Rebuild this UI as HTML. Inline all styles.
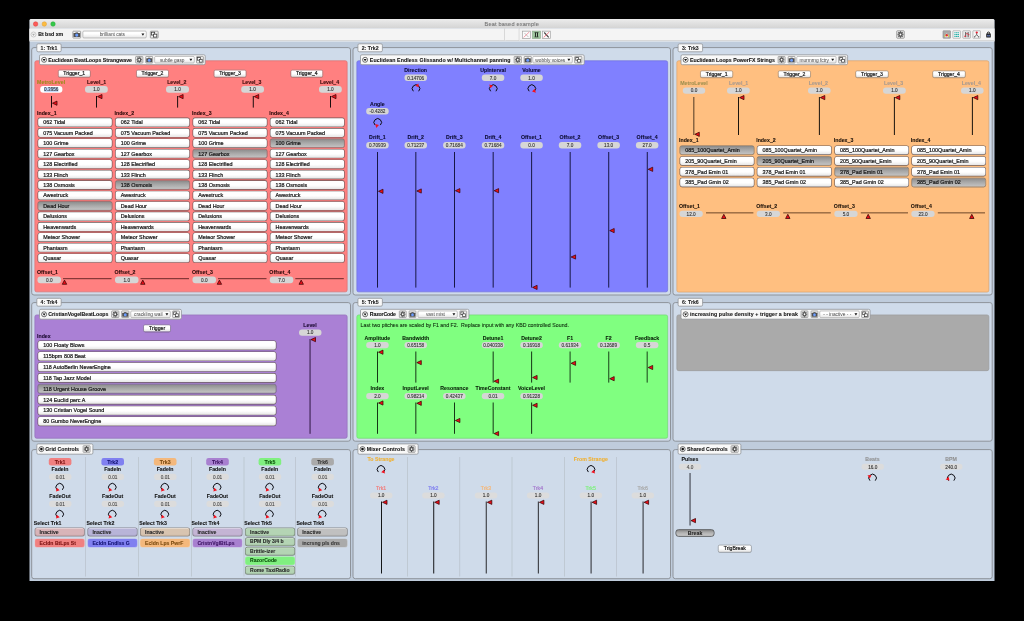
<!DOCTYPE html>
<html><head><meta charset="utf-8"><title>Beat based example</title>
<style>
html,body{margin:0;padding:0;background:#000;}
body{width:1024px;height:621px;position:relative;overflow:hidden;font-family:"Liberation Sans",sans-serif;}
#s{position:absolute;left:0;top:0;width:10240px;height:6210px;transform:scale(0.1);transform-origin:0 0;will-change:transform;}

#s>div,#s>span,#s>svg{position:absolute;box-sizing:border-box;}
.t{font-size:52.5px;line-height:80px;height:80px;white-space:nowrap;color:#111;}
.b{font-weight:bold;-webkit-text-stroke:0.8px currentColor;}
.m{font-weight:normal;-webkit-text-stroke:2.2px currentColor;}
.r{font-weight:normal;-webkit-text-stroke:1px currentColor;}
.win{background:#bfccdc;border-radius:16px 16px 0 0;overflow:hidden;}
.tbar{background:linear-gradient(#ececec,#d4d4d4);border-bottom:5px solid #b0b0b0;border-radius:16px 16px 0 0;}
.dot{border-radius:50%;border:5px solid #000;}
.tool{background:#f4f4f4;}
.seg{background:#f4f4f4;border-bottom:5.5px solid #bdbdbd;border-right:5.5px solid #bdbdbd;}
.grp{border:10px solid #8e939a;border-radius:28px;background:#cfdbea;}
.tab,.tb{background:#f8f8f8;border:8.5px solid #8f9398;border-radius:18px;}
.pan{border:7px solid #888;border-radius:22px;}
.vb{background:#d6d6d6;border-radius:30px;}
.vb2{background:#dcdcdc;border-radius:30px;}
.btn{background:linear-gradient(#fff 50%,#e2e2e2);border:5.5px solid #7c7c7c;border-radius:18px;box-shadow:0 4px 3px rgba(0,0,0,.2);}
.it{background:linear-gradient(#fff 55%,#e6e6e6);border:6px solid rgba(80,64,64,.8);border-radius:24px;box-shadow:0 3px 3px rgba(0,0,0,.2);}
.it.sel{background:linear-gradient(#8c8c8c,#a8a8a8 45%,#c4c4c4);border-color:#6c6c6c;}
.gi{border:7px solid rgba(80,80,80,.55);border-radius:25px;box-shadow:inset 0 8px 6px rgba(255,255,255,.35),inset 0 -8px 8px rgba(0,0,0,.12);}
.gi.gs{border-color:rgba(255,255,255,.2);box-shadow:none;border-radius:28px;}
.bdg{border-radius:24px;}
.brk{background:linear-gradient(#8a8a8a,#b4b4b4 50%,#c8c8c8);border:8px solid #4a4a4a;border-radius:30px;}
.sel2{background:linear-gradient(#fff 40%,#e6e6e6);border:5.5px solid #8c8c8c;border-radius:13px;}
.ln{background:#000;}
.mk{width:54px;height:50px;overflow:visible;}
.kn{width:120px;height:120px;overflow:visible;}
.ic{overflow:visible;}
</style></head>
<body>

<div id="s">
<div class="win" style="left:295px;top:190px;width:9650px;height:5619px;"></div>
<div class="tbar" style="left:295px;top:190px;width:9650px;height:96px;"></div>
<div class="dot" style="left:331px;top:215px;width:50px;height:50px;background:#fc5b57;border-color:#df3e3a;"></div>
<div class="dot" style="left:418px;top:215px;width:50px;height:50px;background:#fdbc40;border-color:#de9f34;"></div>
<div class="dot" style="left:505px;top:215px;width:50px;height:50px;background:#34c84a;border-color:#27aa35;"></div>
<span class="t r" style="left:5117px;top:201px;transform:translateX(-50%);font-size:56px;color:#767676;letter-spacing:1.9px;-webkit-text-stroke:1px currentColor;">Beat based example</span>
<div class="tool" style="left:295px;top:286px;width:9650px;height:129px;"></div>
<div class="seg" style="left:295px;top:286px;width:4752px;height:119px;"></div>
<div class="seg" style="left:5052px;top:286px;width:141px;height:119px;"></div>
<div class="seg" style="left:5198px;top:286px;width:4747px;height:119px;"></div>
<svg class="ic" opacity="0.3" style="left:300px;top:310px;width:70px;height:70px" viewBox="0 0 7 7"><circle cx="3.5" cy="3.5" r="2.5" fill="#fff" stroke="#222" stroke-width="0.65"/><path d="M2 2.7H5L3.5 4.9Z" fill="#111"/></svg>
<span class="t b" style="left:382px;top:305px;letter-spacing:-0.5px;">Bt bsd xm</span>
<svg class="ic" preserveAspectRatio="none" style="left:725px;top:308px;width:85px;height:76px" viewBox="0 0 8 7"><rect x="0.35" y="0.35" width="7.3" height="6.3" rx="0.5" fill="#f6f6f6" stroke="#8c8c8c" stroke-width="0.75"/><rect x="0.9" y="2.1" width="6.2" height="3.7" rx="0.5" fill="#505050"/><rect x="2.8" y="1.5" width="2.4" height="1" fill="#505050"/><circle cx="4" cy="3.95" r="1.45" fill="#6a9cff"/></svg>
<div class="sel2" style="left:826px;top:308px;width:639px;height:74px;"></div>
<span class="t r" style="left:1123.5px;top:307px;transform:translateX(-50%);font-size:48px;color:#484848;-webkit-text-stroke:0;">brilliant cats</span>
<svg class="ic" style="left:1414px;top:335px;width:30px;height:22px" viewBox="0 0 4 3"><path d="M0 0H4L2 3Z" fill="#111"/></svg>
<svg class="ic" preserveAspectRatio="none" style="left:1500px;top:308px;width:85px;height:76px" viewBox="0 0 8 7"><rect x="0.35" y="0.35" width="7.3" height="6.3" rx="0.5" fill="#efefef" stroke="#8c8c8c" stroke-width="0.75"/><rect x="1.5" y="1.3" width="2.9" height="2.6" fill="#fff" stroke="#333" stroke-width="0.7"/><rect x="3.4" y="3.1" width="3" height="2.7" fill="#fff" stroke="#333" stroke-width="0.7"/></svg>
<svg class="ic" preserveAspectRatio="none" style="left:5222px;top:308px;width:84px;height:79px" viewBox="0 0 8 7"><rect x="0.3" y="0.3" width="7.4" height="6.4" fill="#fbfbfb" stroke="#9c9c9c" stroke-width="0.6"/><path d="M2.2 2L6 5.6" stroke="#a0a0a0" stroke-width="0.6"/><path d="M1.3 5.9L6.7 1.1" stroke="#f07888" stroke-width="0.65"/></svg>
<svg class="ic" preserveAspectRatio="none" style="left:5322px;top:308px;width:85px;height:79px" viewBox="0 0 8 7"><rect x="0.3" y="0.3" width="7.4" height="6.4" fill="#a0c8a0" stroke="#88a888" stroke-width="0.6"/><path d="M3.1 1.7V5.3M5 1.7V5.3" stroke="#111" stroke-width="0.8"/><path d="M2.2 1.6H5.9M2.2 5.4H5.9" stroke="#111" stroke-width="0.55"/></svg>
<svg class="ic" preserveAspectRatio="none" style="left:5423px;top:308px;width:83px;height:79px" viewBox="0 0 8 7"><rect x="0.3" y="0.3" width="7.4" height="6.4" fill="#fbfbfb" stroke="#9c9c9c" stroke-width="0.6"/><path d="M1.9 1.5L6.2 5.8" stroke="#3a3a3a" stroke-width="1"/><path d="M1.3 5.9L6.7 1.1" stroke="#f05868" stroke-width="0.7"/></svg>
<svg class="ic" preserveAspectRatio="none" style="left:8964px;top:304px;width:82px;height:82px" viewBox="0 0 8 7"><rect x="0.35" y="0.35" width="7.3" height="6.3" rx="0.5" fill="#efefef" stroke="#8c8c8c" stroke-width="0.75"/><path d="M5.80 3.50L6.85 3.50M5.27 4.77L6.02 5.52M4.00 5.30L4.00 6.35M2.73 4.77L1.98 5.52M2.20 3.50L1.15 3.50M2.73 2.23L1.98 1.48M4.00 1.70L4.00 0.65M5.27 2.23L6.02 1.48" stroke="#555" stroke-width="1.15"/><circle cx="4" cy="3.5" r="1.5" fill="#fff" stroke="#555" stroke-width="1.25"/></svg>
<svg class="ic" preserveAspectRatio="none" style="left:9427px;top:304px;width:81px;height:82px" viewBox="0 0 8 7"><rect x="0.3" y="0.3" width="7.4" height="6.4" rx="0.4" fill="#a9a9a9" stroke="#8e8e8e" stroke-width="0.6"/><path d="M1.5 5.3A2.6 2.9 0 0 1 6.5 5.3L5.2 5.6A1.3 1.6 0 0 0 2.8 5.6Z" fill="#e6dc3c"/><path d="M2.6 5.8L4 2.2L5.4 5.8Z" fill="#f4f4f4"/><circle cx="4" cy="4.1" r="1.05" fill="#e02838"/></svg>
<svg class="ic" preserveAspectRatio="none" style="left:9526px;top:304px;width:81px;height:82px" viewBox="0 0 8 7"><rect x="0.3" y="0.3" width="7.4" height="6.4" rx="0.4" fill="#f6f6f6" stroke="#a0a0a0" stroke-width="0.6"/><path d="M1.7 2H6.3M1.7 3.6H6.3M1.7 5.2H6.3" stroke="#2cb0a8" stroke-width="1.05" stroke-dasharray="1.3 0.35"/></svg>
<svg class="ic" preserveAspectRatio="none" style="left:9625px;top:304px;width:82px;height:82px" viewBox="0 0 8 7"><rect x="0.3" y="0.3" width="7.4" height="6.4" rx="0.4" fill="#ececec" stroke="#a0a0a0" stroke-width="0.6"/><path d="M3.1 1.4V5.8M5.5 1.4V5.8" stroke="#4a4a4a" stroke-width="0.85"/><path d="M1.6 5H3.6M3.8 2.7H5M5.6 3.6H6.6" stroke="#e03040" stroke-width="1.05"/></svg>
<svg class="ic" preserveAspectRatio="none" style="left:9726px;top:304px;width:81px;height:82px" viewBox="0 0 8 7"><rect x="0.3" y="0.3" width="7.4" height="6.4" rx="0.4" fill="#f6f6f6" stroke="#a0a0a0" stroke-width="0.6"/><path d="M4 2V3.6L2.2 5.4M4 3.6L5.8 5.4" stroke="#3c3c3c" stroke-width="0.65" fill="none"/><circle cx="2" cy="5.5" r="0.7" fill="#777"/><circle cx="6" cy="5.5" r="0.7" fill="#777"/><ellipse cx="4.1" cy="1.8" rx="1.1" ry="0.8" fill="#e82030"/></svg>
<svg class="ic" preserveAspectRatio="none" style="left:9854px;top:312px;width:62px;height:70px" viewBox="0 0 8 7"><rect x="0" y="0" width="8" height="7" rx="1.5" fill="#fbfbfb"/><path d="M2.5 2.6V2A1.5 1.2 0 0 1 5.5 2V2.6" fill="none" stroke="#111" stroke-width="1"/><rect x="1.1" y="2.4" width="5.8" height="4" rx="0.5" fill="#141414"/><rect x="2.3" y="3.6" width="3.4" height="1.7" fill="#7088c8"/><path d="M4 3.6V5.3" stroke="#141414" stroke-width="0.4"/></svg>
<div class="grp" style="left:312px;top:471px;width:3198px;height:2484px;"></div>
<div class="grp" style="left:312px;top:3021px;width:3198px;height:1396px;"></div>
<div class="grp" style="left:312px;top:4491px;width:3198px;height:1301px;"></div>
<div class="grp" style="left:3525px;top:471px;width:3185px;height:2484px;"></div>
<div class="grp" style="left:3525px;top:3021px;width:3185px;height:1396px;"></div>
<div class="grp" style="left:3525px;top:4491px;width:3185px;height:1301px;"></div>
<div class="grp" style="left:6725px;top:471px;width:3202px;height:2484px;"></div>
<div class="grp" style="left:6725px;top:3021px;width:3202px;height:1396px;"></div>
<div class="grp" style="left:6725px;top:4491px;width:3202px;height:1301px;"></div>
<div class="tab" style="left:364px;top:434px;width:252px;height:88px;"></div>
<span class="t b" style="left:490px;top:440px;transform:translateX(-50%);font-size:52px;color:#222;">1: Trk1</span>
<div class="tab" style="left:364px;top:2979px;width:252px;height:87px;"></div>
<span class="t b" style="left:490px;top:2984.5px;transform:translateX(-50%);font-size:52px;color:#222;">4: Trk4</span>
<div class="tab" style="left:3575px;top:434px;width:253px;height:88px;"></div>
<span class="t b" style="left:3701.5px;top:440px;transform:translateX(-50%);font-size:52px;color:#222;">2: Trk2</span>
<div class="tab" style="left:3575px;top:2979px;width:253px;height:87px;"></div>
<span class="t b" style="left:3701.5px;top:2984.5px;transform:translateX(-50%);font-size:52px;color:#222;">5: Trk5</span>
<div class="tab" style="left:6777px;top:434px;width:253px;height:88px;"></div>
<span class="t b" style="left:6903.5px;top:440px;transform:translateX(-50%);font-size:52px;color:#222;">3: Trk3</span>
<div class="tab" style="left:6777px;top:2979px;width:253px;height:87px;"></div>
<span class="t b" style="left:6903.5px;top:2984.5px;transform:translateX(-50%);font-size:52px;color:#222;">6: Trk6</span>
<div class="pan" style="left:345px;top:604px;width:3130px;height:2318px;background:#ff8080;border-color:#d97070;"></div>
<div class="tb" style="left:391px;top:544px;width:1665px;height:107px;"></div>
<svg class="ic" style="left:406px;top:562.5px;width:70px;height:70px" viewBox="0 0 7 7"><circle cx="3.5" cy="3.5" r="2.5" fill="#fff" stroke="#222" stroke-width="0.65"/><path d="M2 2.7H5L3.5 4.9Z" fill="#111"/></svg>
<span class="t b" style="left:483px;top:559.5px;letter-spacing:-0.2px;">Euclidean BeatLoops Strangwave</span>
<svg class="ic" preserveAspectRatio="none" style="left:1353px;top:561px;width:79px;height:73px" viewBox="0 0 8 7"><rect x="0.35" y="0.35" width="7.3" height="6.3" rx="0.5" fill="#efefef" stroke="#8c8c8c" stroke-width="0.75"/><path d="M5.80 3.50L6.85 3.50M5.27 4.77L6.02 5.52M4.00 5.30L4.00 6.35M2.73 4.77L1.98 5.52M2.20 3.50L1.15 3.50M2.73 2.23L1.98 1.48M4.00 1.70L4.00 0.65M5.27 2.23L6.02 1.48" stroke="#555" stroke-width="1.15"/><circle cx="4" cy="3.5" r="1.5" fill="#fff" stroke="#555" stroke-width="1.25"/></svg>
<svg class="ic" preserveAspectRatio="none" style="left:1454px;top:561px;width:76px;height:73px" viewBox="0 0 8 7"><rect x="0.35" y="0.35" width="7.3" height="6.3" rx="0.5" fill="#f6f6f6" stroke="#8c8c8c" stroke-width="0.75"/><rect x="0.9" y="2.1" width="6.2" height="3.7" rx="0.5" fill="#505050"/><rect x="2.8" y="1.5" width="2.4" height="1" fill="#505050"/><circle cx="4" cy="3.95" r="1.45" fill="#6a9cff"/></svg>
<div class="sel2" style="left:1544px;top:562px;width:401px;height:71px;"></div>
<span class="t r" style="left:1722.5px;top:559.5px;transform:translateX(-50%);font-size:48px;color:#484848;-webkit-text-stroke:0;">subtle gasp</span>
<svg class="ic" style="left:1894px;top:587.5px;width:30px;height:22px" viewBox="0 0 4 3"><path d="M0 0H4L2 3Z" fill="#111"/></svg>
<svg class="ic" preserveAspectRatio="none" style="left:1962px;top:561px;width:75px;height:73px" viewBox="0 0 8 7"><rect x="0.35" y="0.35" width="7.3" height="6.3" rx="0.5" fill="#efefef" stroke="#8c8c8c" stroke-width="0.75"/><rect x="1.5" y="1.3" width="2.9" height="2.6" fill="#fff" stroke="#333" stroke-width="0.7"/><rect x="3.4" y="3.1" width="3" height="2.7" fill="#fff" stroke="#333" stroke-width="0.7"/></svg>
<div class="btn" style="left:580px;top:698px;width:325px;height:76px;"></div>
<span class="t m" style="left:742.5px;top:694px;transform:translateX(-50%);font-size:51.5px;color:#1c1c1c;">Trigger_1</span>
<div class="btn" style="left:1362px;top:698px;width:326px;height:76px;"></div>
<span class="t m" style="left:1525px;top:694px;transform:translateX(-50%);font-size:51.5px;color:#1c1c1c;">Trigger_2</span>
<div class="btn" style="left:2138px;top:698px;width:325px;height:76px;"></div>
<span class="t m" style="left:2300.5px;top:694px;transform:translateX(-50%);font-size:51.5px;color:#1c1c1c;">Trigger_3</span>
<div class="btn" style="left:2906px;top:698px;width:324px;height:76px;"></div>
<span class="t m" style="left:3068px;top:694px;transform:translateX(-50%);font-size:51.5px;color:#1c1c1c;">Trigger_4</span>
<span class="t b" style="left:370px;top:780px;color:#9c8a1c;letter-spacing:0.5px;">MetroLevel</span>
<div class="vb" style="left:402px;top:860px;width:222px;height:68px;background:#fff;"></div>
<div class="" style="left:442px;top:872px;width:142px;height:46px;background:#b9d6fb;"></div>
<span class="t r" style="left:513px;top:856px;transform:translateX(-50%);font-size:47px;color:#333;">0.3956</span>
<div class="ln" style="left:510.5px;top:960px;width:9px;height:116px;"></div>
<svg class="mk" viewBox="0 0 5.4 5" style="left:521px;top:1007px"><path d="M0.4 2.5L4.9 0.4V4.6Z" fill="#ee0c18" stroke="#3a0606" stroke-width="0.75" stroke-linejoin="round"/></svg>
<span class="t b" style="left:870px;top:780px;color:#3a0a0a;">Level_1</span>
<div class="vb" style="left:850px;top:860px;width:228px;height:68px;"></div>
<span class="t r" style="left:964px;top:856px;transform:translateX(-50%);font-size:47px;color:#333;">1.0</span>
<div class="ln" style="left:960.5px;top:960px;width:9px;height:116px;"></div>
<svg class="mk" viewBox="0 0 5.4 5" style="left:971px;top:941px"><path d="M0.4 2.5L4.9 0.4V4.6Z" fill="#ee0c18" stroke="#3a0606" stroke-width="0.75" stroke-linejoin="round"/></svg>
<span class="t b" style="left:1864px;top:780px;transform:translateX(-100%);color:#3a0a0a;">Level_2</span>
<div class="vb" style="left:1660px;top:860px;width:230px;height:68px;"></div>
<span class="t r" style="left:1775px;top:856px;transform:translateX(-50%);font-size:47px;color:#333;">1.0</span>
<div class="ln" style="left:1771.5px;top:960px;width:9px;height:116px;"></div>
<svg class="mk" viewBox="0 0 5.4 5" style="left:1782px;top:941px"><path d="M0.4 2.5L4.9 0.4V4.6Z" fill="#ee0c18" stroke="#3a0606" stroke-width="0.75" stroke-linejoin="round"/></svg>
<span class="t b" style="left:2614px;top:780px;transform:translateX(-100%);color:#3a0a0a;">Level_3</span>
<div class="vb" style="left:2412px;top:860px;width:228px;height:68px;"></div>
<span class="t r" style="left:2526px;top:856px;transform:translateX(-50%);font-size:47px;color:#333;">1.0</span>
<div class="ln" style="left:2527.5px;top:960px;width:9px;height:116px;"></div>
<svg class="mk" viewBox="0 0 5.4 5" style="left:2538px;top:941px"><path d="M0.4 2.5L4.9 0.4V4.6Z" fill="#ee0c18" stroke="#3a0606" stroke-width="0.75" stroke-linejoin="round"/></svg>
<span class="t b" style="left:3392px;top:780px;transform:translateX(-100%);color:#3a0a0a;">Level_4</span>
<div class="vb" style="left:3190px;top:860px;width:228px;height:68px;"></div>
<span class="t r" style="left:3304px;top:856px;transform:translateX(-50%);font-size:47px;color:#333;">1.0</span>
<div class="ln" style="left:3300.5px;top:960px;width:9px;height:116px;"></div>
<svg class="mk" viewBox="0 0 5.4 5" style="left:3311px;top:941px"><path d="M0.4 2.5L4.9 0.4V4.6Z" fill="#ee0c18" stroke="#3a0606" stroke-width="0.75" stroke-linejoin="round"/></svg>
<span class="t b" style="left:370px;top:1091px;color:#2a0808;">Index_1</span>
<div class="it" style="left:376px;top:1176px;width:748px;height:94px;"></div>
<span class="t m" style="left:432px;top:1183.5px;font-size:54.2px;color:#1a1a1a;">062 Tidal</span>
<div class="it" style="left:376px;top:1280.5px;width:748px;height:94px;"></div>
<span class="t m" style="left:432px;top:1287.9px;font-size:54.2px;color:#1a1a1a;">075 Vacuum Packed</span>
<div class="it" style="left:376px;top:1384.9px;width:748px;height:94px;"></div>
<span class="t m" style="left:432px;top:1392.4px;font-size:54.2px;color:#1a1a1a;">100 Grime</span>
<div class="it" style="left:376px;top:1489.4px;width:748px;height:94px;"></div>
<span class="t m" style="left:432px;top:1496.8px;font-size:54.2px;color:#1a1a1a;">127 Gearbox</span>
<div class="it" style="left:376px;top:1593.8px;width:748px;height:94px;"></div>
<span class="t m" style="left:432px;top:1601.3px;font-size:54.2px;color:#1a1a1a;">128 Electrified</span>
<div class="it" style="left:376px;top:1698.3px;width:748px;height:94px;"></div>
<span class="t m" style="left:432px;top:1705.7px;font-size:54.2px;color:#1a1a1a;">133 Flinch</span>
<div class="it" style="left:376px;top:1802.7px;width:748px;height:94px;"></div>
<span class="t m" style="left:432px;top:1810.2px;font-size:54.2px;color:#1a1a1a;">138 Osmosis</span>
<div class="it" style="left:376px;top:1907.2px;width:748px;height:94px;"></div>
<span class="t m" style="left:432px;top:1914.7px;font-size:54.2px;color:#1a1a1a;">Awestruck</span>
<div class="it sel" style="left:376px;top:2011.6px;width:748px;height:94px;"></div>
<span class="t m" style="left:432px;top:2019.1px;font-size:54.2px;color:#1a1a1a;">Dead Hour</span>
<div class="it" style="left:376px;top:2116.1px;width:748px;height:94px;"></div>
<span class="t m" style="left:432px;top:2123.5px;font-size:54.2px;color:#1a1a1a;">Delusions</span>
<div class="it" style="left:376px;top:2220.5px;width:748px;height:94px;"></div>
<span class="t m" style="left:432px;top:2228px;font-size:54.2px;color:#1a1a1a;">Heavenwards</span>
<div class="it" style="left:376px;top:2325px;width:748px;height:94px;"></div>
<span class="t m" style="left:432px;top:2332.4px;font-size:54.2px;color:#1a1a1a;">Meteor Shower</span>
<div class="it" style="left:376px;top:2429.4px;width:748px;height:94px;"></div>
<span class="t m" style="left:432px;top:2436.9px;font-size:54.2px;color:#1a1a1a;">Phantasm</span>
<div class="it" style="left:376px;top:2533.8px;width:748px;height:94px;"></div>
<span class="t m" style="left:432px;top:2541.3px;font-size:54.2px;color:#1a1a1a;">Quasar</span>
<span class="t b" style="left:370px;top:2681px;color:#2a0808;">Offset_1</span>
<span class="t b" style="left:1145px;top:1091px;color:#2a0808;">Index_2</span>
<div class="it" style="left:1151px;top:1176px;width:748px;height:94px;"></div>
<span class="t m" style="left:1207px;top:1183.5px;font-size:54.2px;color:#1a1a1a;">062 Tidal</span>
<div class="it" style="left:1151px;top:1280.5px;width:748px;height:94px;"></div>
<span class="t m" style="left:1207px;top:1287.9px;font-size:54.2px;color:#1a1a1a;">075 Vacuum Packed</span>
<div class="it" style="left:1151px;top:1384.9px;width:748px;height:94px;"></div>
<span class="t m" style="left:1207px;top:1392.4px;font-size:54.2px;color:#1a1a1a;">100 Grime</span>
<div class="it" style="left:1151px;top:1489.4px;width:748px;height:94px;"></div>
<span class="t m" style="left:1207px;top:1496.8px;font-size:54.2px;color:#1a1a1a;">127 Gearbox</span>
<div class="it" style="left:1151px;top:1593.8px;width:748px;height:94px;"></div>
<span class="t m" style="left:1207px;top:1601.3px;font-size:54.2px;color:#1a1a1a;">128 Electrified</span>
<div class="it" style="left:1151px;top:1698.3px;width:748px;height:94px;"></div>
<span class="t m" style="left:1207px;top:1705.7px;font-size:54.2px;color:#1a1a1a;">133 Flinch</span>
<div class="it sel" style="left:1151px;top:1802.7px;width:748px;height:94px;"></div>
<span class="t m" style="left:1207px;top:1810.2px;font-size:54.2px;color:#1a1a1a;">138 Osmosis</span>
<div class="it" style="left:1151px;top:1907.2px;width:748px;height:94px;"></div>
<span class="t m" style="left:1207px;top:1914.7px;font-size:54.2px;color:#1a1a1a;">Awestruck</span>
<div class="it" style="left:1151px;top:2011.6px;width:748px;height:94px;"></div>
<span class="t m" style="left:1207px;top:2019.1px;font-size:54.2px;color:#1a1a1a;">Dead Hour</span>
<div class="it" style="left:1151px;top:2116.1px;width:748px;height:94px;"></div>
<span class="t m" style="left:1207px;top:2123.5px;font-size:54.2px;color:#1a1a1a;">Delusions</span>
<div class="it" style="left:1151px;top:2220.5px;width:748px;height:94px;"></div>
<span class="t m" style="left:1207px;top:2228px;font-size:54.2px;color:#1a1a1a;">Heavenwards</span>
<div class="it" style="left:1151px;top:2325px;width:748px;height:94px;"></div>
<span class="t m" style="left:1207px;top:2332.4px;font-size:54.2px;color:#1a1a1a;">Meteor Shower</span>
<div class="it" style="left:1151px;top:2429.4px;width:748px;height:94px;"></div>
<span class="t m" style="left:1207px;top:2436.9px;font-size:54.2px;color:#1a1a1a;">Phantasm</span>
<div class="it" style="left:1151px;top:2533.8px;width:748px;height:94px;"></div>
<span class="t m" style="left:1207px;top:2541.3px;font-size:54.2px;color:#1a1a1a;">Quasar</span>
<span class="t b" style="left:1145px;top:2681px;color:#2a0808;">Offset_2</span>
<span class="t b" style="left:1920px;top:1091px;color:#2a0808;">Index_3</span>
<div class="it" style="left:1926px;top:1176px;width:748px;height:94px;"></div>
<span class="t m" style="left:1982px;top:1183.5px;font-size:54.2px;color:#1a1a1a;">062 Tidal</span>
<div class="it" style="left:1926px;top:1280.5px;width:748px;height:94px;"></div>
<span class="t m" style="left:1982px;top:1287.9px;font-size:54.2px;color:#1a1a1a;">075 Vacuum Packed</span>
<div class="it" style="left:1926px;top:1384.9px;width:748px;height:94px;"></div>
<span class="t m" style="left:1982px;top:1392.4px;font-size:54.2px;color:#1a1a1a;">100 Grime</span>
<div class="it sel" style="left:1926px;top:1489.4px;width:748px;height:94px;"></div>
<span class="t m" style="left:1982px;top:1496.8px;font-size:54.2px;color:#1a1a1a;">127 Gearbox</span>
<div class="it" style="left:1926px;top:1593.8px;width:748px;height:94px;"></div>
<span class="t m" style="left:1982px;top:1601.3px;font-size:54.2px;color:#1a1a1a;">128 Electrified</span>
<div class="it" style="left:1926px;top:1698.3px;width:748px;height:94px;"></div>
<span class="t m" style="left:1982px;top:1705.7px;font-size:54.2px;color:#1a1a1a;">133 Flinch</span>
<div class="it" style="left:1926px;top:1802.7px;width:748px;height:94px;"></div>
<span class="t m" style="left:1982px;top:1810.2px;font-size:54.2px;color:#1a1a1a;">138 Osmosis</span>
<div class="it" style="left:1926px;top:1907.2px;width:748px;height:94px;"></div>
<span class="t m" style="left:1982px;top:1914.7px;font-size:54.2px;color:#1a1a1a;">Awestruck</span>
<div class="it" style="left:1926px;top:2011.6px;width:748px;height:94px;"></div>
<span class="t m" style="left:1982px;top:2019.1px;font-size:54.2px;color:#1a1a1a;">Dead Hour</span>
<div class="it" style="left:1926px;top:2116.1px;width:748px;height:94px;"></div>
<span class="t m" style="left:1982px;top:2123.5px;font-size:54.2px;color:#1a1a1a;">Delusions</span>
<div class="it" style="left:1926px;top:2220.5px;width:748px;height:94px;"></div>
<span class="t m" style="left:1982px;top:2228px;font-size:54.2px;color:#1a1a1a;">Heavenwards</span>
<div class="it" style="left:1926px;top:2325px;width:748px;height:94px;"></div>
<span class="t m" style="left:1982px;top:2332.4px;font-size:54.2px;color:#1a1a1a;">Meteor Shower</span>
<div class="it" style="left:1926px;top:2429.4px;width:748px;height:94px;"></div>
<span class="t m" style="left:1982px;top:2436.9px;font-size:54.2px;color:#1a1a1a;">Phantasm</span>
<div class="it" style="left:1926px;top:2533.8px;width:748px;height:94px;"></div>
<span class="t m" style="left:1982px;top:2541.3px;font-size:54.2px;color:#1a1a1a;">Quasar</span>
<span class="t b" style="left:1920px;top:2681px;color:#2a0808;">Offset_3</span>
<span class="t b" style="left:2693px;top:1091px;color:#2a0808;">Index_4</span>
<div class="it" style="left:2699px;top:1176px;width:748px;height:94px;"></div>
<span class="t m" style="left:2755px;top:1183.5px;font-size:54.2px;color:#1a1a1a;">062 Tidal</span>
<div class="it" style="left:2699px;top:1280.5px;width:748px;height:94px;"></div>
<span class="t m" style="left:2755px;top:1287.9px;font-size:54.2px;color:#1a1a1a;">075 Vacuum Packed</span>
<div class="it sel" style="left:2699px;top:1384.9px;width:748px;height:94px;"></div>
<span class="t m" style="left:2755px;top:1392.4px;font-size:54.2px;color:#1a1a1a;">100 Grime</span>
<div class="it" style="left:2699px;top:1489.4px;width:748px;height:94px;"></div>
<span class="t m" style="left:2755px;top:1496.8px;font-size:54.2px;color:#1a1a1a;">127 Gearbox</span>
<div class="it" style="left:2699px;top:1593.8px;width:748px;height:94px;"></div>
<span class="t m" style="left:2755px;top:1601.3px;font-size:54.2px;color:#1a1a1a;">128 Electrified</span>
<div class="it" style="left:2699px;top:1698.3px;width:748px;height:94px;"></div>
<span class="t m" style="left:2755px;top:1705.7px;font-size:54.2px;color:#1a1a1a;">133 Flinch</span>
<div class="it" style="left:2699px;top:1802.7px;width:748px;height:94px;"></div>
<span class="t m" style="left:2755px;top:1810.2px;font-size:54.2px;color:#1a1a1a;">138 Osmosis</span>
<div class="it" style="left:2699px;top:1907.2px;width:748px;height:94px;"></div>
<span class="t m" style="left:2755px;top:1914.7px;font-size:54.2px;color:#1a1a1a;">Awestruck</span>
<div class="it" style="left:2699px;top:2011.6px;width:748px;height:94px;"></div>
<span class="t m" style="left:2755px;top:2019.1px;font-size:54.2px;color:#1a1a1a;">Dead Hour</span>
<div class="it" style="left:2699px;top:2116.1px;width:748px;height:94px;"></div>
<span class="t m" style="left:2755px;top:2123.5px;font-size:54.2px;color:#1a1a1a;">Delusions</span>
<div class="it" style="left:2699px;top:2220.5px;width:748px;height:94px;"></div>
<span class="t m" style="left:2755px;top:2228px;font-size:54.2px;color:#1a1a1a;">Heavenwards</span>
<div class="it" style="left:2699px;top:2325px;width:748px;height:94px;"></div>
<span class="t m" style="left:2755px;top:2332.4px;font-size:54.2px;color:#1a1a1a;">Meteor Shower</span>
<div class="it" style="left:2699px;top:2429.4px;width:748px;height:94px;"></div>
<span class="t m" style="left:2755px;top:2436.9px;font-size:54.2px;color:#1a1a1a;">Phantasm</span>
<div class="it" style="left:2699px;top:2533.8px;width:748px;height:94px;"></div>
<span class="t m" style="left:2755px;top:2541.3px;font-size:54.2px;color:#1a1a1a;">Quasar</span>
<span class="t b" style="left:2693px;top:2681px;color:#2a0808;">Offset_4</span>
<div class="vb" style="left:375px;top:2766px;width:235px;height:66px;"></div>
<span class="t r" style="left:492.5px;top:2761px;transform:translateX(-50%);font-size:47px;color:#333;">0.0</span>
<div class="ln" style="left:630px;top:2780.5px;width:485px;height:11px;background:#7a3030;"></div>
<svg class="mk" viewBox="0 0 5.4 5" style="left:618px;top:2797px"><path d="M2.7 0.4L4.9 4.6H0.5Z" fill="#ee0c18" stroke="#3a0606" stroke-width="0.75" stroke-linejoin="round"/></svg>
<div class="vb" style="left:1150px;top:2766px;width:235px;height:66px;"></div>
<span class="t r" style="left:1267.5px;top:2761px;transform:translateX(-50%);font-size:47px;color:#333;">1.0</span>
<div class="ln" style="left:1405px;top:2780.5px;width:485px;height:11px;background:#7a3030;"></div>
<svg class="mk" viewBox="0 0 5.4 5" style="left:1401px;top:2797px"><path d="M2.7 0.4L4.9 4.6H0.5Z" fill="#ee0c18" stroke="#3a0606" stroke-width="0.75" stroke-linejoin="round"/></svg>
<div class="vb" style="left:1925px;top:2766px;width:235px;height:66px;"></div>
<span class="t r" style="left:2042.5px;top:2761px;transform:translateX(-50%);font-size:47px;color:#333;">0.0</span>
<div class="ln" style="left:2180px;top:2780.5px;width:485px;height:11px;background:#7a3030;"></div>
<svg class="mk" viewBox="0 0 5.4 5" style="left:2167px;top:2797px"><path d="M2.7 0.4L4.9 4.6H0.5Z" fill="#ee0c18" stroke="#3a0606" stroke-width="0.75" stroke-linejoin="round"/></svg>
<div class="vb" style="left:2698px;top:2766px;width:235px;height:66px;"></div>
<span class="t r" style="left:2815.5px;top:2761px;transform:translateX(-50%);font-size:47px;color:#333;">7.0</span>
<div class="ln" style="left:2953px;top:2780.5px;width:485px;height:11px;background:#7a3030;"></div>
<svg class="mk" viewBox="0 0 5.4 5" style="left:2985px;top:2797px"><path d="M2.7 0.4L4.9 4.6H0.5Z" fill="#ee0c18" stroke="#3a0606" stroke-width="0.75" stroke-linejoin="round"/></svg>
<div class="pan" style="left:3565px;top:604px;width:3115px;height:2318px;background:#8080ff;border-color:#7070dd;"></div>
<div class="tb" style="left:3601px;top:544px;width:2245px;height:107px;"></div>
<svg class="ic" style="left:3616px;top:562.5px;width:70px;height:70px" viewBox="0 0 7 7"><circle cx="3.5" cy="3.5" r="2.5" fill="#fff" stroke="#222" stroke-width="0.65"/><path d="M2 2.7H5L3.5 4.9Z" fill="#111"/></svg>
<span class="t b" style="left:3698px;top:559.5px;letter-spacing:1px;">Euclidean Endless Glissando w/ Multichannel panning</span>
<svg class="ic" preserveAspectRatio="none" style="left:5138px;top:561px;width:79px;height:73px" viewBox="0 0 8 7"><rect x="0.35" y="0.35" width="7.3" height="6.3" rx="0.5" fill="#efefef" stroke="#8c8c8c" stroke-width="0.75"/><path d="M5.80 3.50L6.85 3.50M5.27 4.77L6.02 5.52M4.00 5.30L4.00 6.35M2.73 4.77L1.98 5.52M2.20 3.50L1.15 3.50M2.73 2.23L1.98 1.48M4.00 1.70L4.00 0.65M5.27 2.23L6.02 1.48" stroke="#555" stroke-width="1.15"/><circle cx="4" cy="3.5" r="1.5" fill="#fff" stroke="#555" stroke-width="1.25"/></svg>
<svg class="ic" preserveAspectRatio="none" style="left:5238px;top:561px;width:79px;height:73px" viewBox="0 0 8 7"><rect x="0.35" y="0.35" width="7.3" height="6.3" rx="0.5" fill="#f6f6f6" stroke="#8c8c8c" stroke-width="0.75"/><rect x="0.9" y="2.1" width="6.2" height="3.7" rx="0.5" fill="#505050"/><rect x="2.8" y="1.5" width="2.4" height="1" fill="#505050"/><circle cx="4" cy="3.95" r="1.45" fill="#6a9cff"/></svg>
<div class="sel2" style="left:5325px;top:562px;width:400px;height:71px;"></div>
<span class="t r" style="left:5503px;top:559.5px;transform:translateX(-50%);font-size:48px;color:#484848;-webkit-text-stroke:0;">wobbly voices</span>
<svg class="ic" style="left:5674px;top:587.5px;width:30px;height:22px" viewBox="0 0 4 3"><path d="M0 0H4L2 3Z" fill="#111"/></svg>
<svg class="ic" preserveAspectRatio="none" style="left:5743px;top:561px;width:79px;height:73px" viewBox="0 0 8 7"><rect x="0.35" y="0.35" width="7.3" height="6.3" rx="0.5" fill="#efefef" stroke="#8c8c8c" stroke-width="0.75"/><rect x="1.5" y="1.3" width="2.9" height="2.6" fill="#fff" stroke="#333" stroke-width="0.7"/><rect x="3.4" y="3.1" width="3" height="2.7" fill="#fff" stroke="#333" stroke-width="0.7"/></svg>
<span class="t b" style="left:4157px;top:663px;transform:translateX(-50%);color:#0a0a30;">Direction</span>
<div class="vb" style="left:4044.5px;top:745px;width:225px;height:65px;"></div>
<span class="t r" style="left:4157px;top:739.5px;transform:translateX(-50%);font-size:47px;color:#333;">0.14706</span>
<svg class="kn" style="left:4100px;top:826px" viewBox="-6 -6 12 12"><path d="M-2.65 2.65A3.75 3.75 0 1 1 2.65 2.65" fill="none" stroke="#0c0c14" stroke-width="1"/><path d="M2.43 -5.21L2.67 -1.24L-0.77 -2.84Z" fill="#f4101c"/></svg>
<span class="t b" style="left:4930px;top:663px;transform:translateX(-50%);color:#0a0a30;">UpInterval</span>
<div class="vb" style="left:4817.5px;top:745px;width:225px;height:65px;"></div>
<span class="t r" style="left:4930px;top:739.5px;transform:translateX(-50%);font-size:47px;color:#333;">7.0</span>
<svg class="kn" style="left:4873px;top:826px" viewBox="-6 -6 12 12"><path d="M-2.65 2.65A3.75 3.75 0 1 1 2.65 2.65" fill="none" stroke="#0c0c14" stroke-width="1"/><path d="M-4.07 -4.07L-0.25 -2.93L-2.93 -0.25Z" fill="#f4101c"/></svg>
<span class="t b" style="left:5315px;top:663px;transform:translateX(-50%);color:#0a0a30;">Volume</span>
<div class="vb" style="left:5202.5px;top:745px;width:225px;height:65px;"></div>
<span class="t r" style="left:5315px;top:739.5px;transform:translateX(-50%);font-size:47px;color:#333;">1.0</span>
<svg class="kn" style="left:5258px;top:826px" viewBox="-6 -6 12 12"><path d="M-2.65 2.65A3.75 3.75 0 1 1 2.65 2.65" fill="none" stroke="#0c0c14" stroke-width="1"/><path d="M4.07 4.07L0.25 2.93L2.93 0.25Z" fill="#f4101c"/></svg>
<span class="t b" style="left:3774px;top:999px;transform:translateX(-50%);color:#0a0a30;">Angle</span>
<div class="vb" style="left:3661.5px;top:1081px;width:225px;height:65px;"></div>
<span class="t r" style="left:3774px;top:1075.5px;transform:translateX(-50%);font-size:47px;color:#333;">-0.4282</span>
<svg class="kn" style="left:3717px;top:1164px" viewBox="-6 -6 12 12"><path d="M-2.65 2.65A3.75 3.75 0 1 1 2.65 2.65" fill="none" stroke="#0c0c14" stroke-width="1"/><path d="M-1.49 5.55L-2.42 1.68L1.25 2.67Z" fill="#f4101c"/></svg>
<span class="t b" style="left:3774px;top:1333px;transform:translateX(-50%);color:#0a0a30;">Drift_1</span>
<div class="vb" style="left:3661.5px;top:1420px;width:225px;height:64px;"></div>
<span class="t r" style="left:3774px;top:1414px;transform:translateX(-50%);font-size:47px;color:#333;">0.70939</span>
<div class="ln" style="left:3770.5px;top:1520px;width:9px;height:1356px;background:#0c0c30;"></div>
<svg class="mk" viewBox="0 0 5.4 5" style="left:3781px;top:1888px"><path d="M0.4 2.5L4.9 0.4V4.6Z" fill="#ee0c18" stroke="#3a0606" stroke-width="0.75" stroke-linejoin="round"/></svg>
<span class="t b" style="left:4157px;top:1333px;transform:translateX(-50%);color:#0a0a30;">Drift_2</span>
<div class="vb" style="left:4044.5px;top:1420px;width:225px;height:64px;"></div>
<span class="t r" style="left:4157px;top:1414px;transform:translateX(-50%);font-size:47px;color:#333;">0.71237</span>
<div class="ln" style="left:4153.5px;top:1520px;width:9px;height:1356px;background:#0c0c30;"></div>
<svg class="mk" viewBox="0 0 5.4 5" style="left:4164px;top:1885px"><path d="M0.4 2.5L4.9 0.4V4.6Z" fill="#ee0c18" stroke="#3a0606" stroke-width="0.75" stroke-linejoin="round"/></svg>
<span class="t b" style="left:4543px;top:1333px;transform:translateX(-50%);color:#0a0a30;">Drift_3</span>
<div class="vb" style="left:4430.5px;top:1420px;width:225px;height:64px;"></div>
<span class="t r" style="left:4543px;top:1414px;transform:translateX(-50%);font-size:47px;color:#333;">0.71684</span>
<div class="ln" style="left:4539.5px;top:1520px;width:9px;height:1356px;background:#0c0c30;"></div>
<svg class="mk" viewBox="0 0 5.4 5" style="left:4550px;top:1882px"><path d="M0.4 2.5L4.9 0.4V4.6Z" fill="#ee0c18" stroke="#3a0606" stroke-width="0.75" stroke-linejoin="round"/></svg>
<span class="t b" style="left:4930px;top:1333px;transform:translateX(-50%);color:#0a0a30;">Drift_4</span>
<div class="vb" style="left:4817.5px;top:1420px;width:225px;height:64px;"></div>
<span class="t r" style="left:4930px;top:1414px;transform:translateX(-50%);font-size:47px;color:#333;">0.71684</span>
<div class="ln" style="left:4926.5px;top:1520px;width:9px;height:1356px;background:#0c0c30;"></div>
<svg class="mk" viewBox="0 0 5.4 5" style="left:4937px;top:1882px"><path d="M0.4 2.5L4.9 0.4V4.6Z" fill="#ee0c18" stroke="#3a0606" stroke-width="0.75" stroke-linejoin="round"/></svg>
<span class="t b" style="left:5315px;top:1333px;transform:translateX(-50%);color:#0a0a30;">Offset_1</span>
<div class="vb" style="left:5202.5px;top:1420px;width:225px;height:64px;"></div>
<span class="t r" style="left:5315px;top:1414px;transform:translateX(-50%);font-size:47px;color:#333;">0.0</span>
<div class="ln" style="left:5311.5px;top:1520px;width:9px;height:1356px;background:#0c0c30;"></div>
<svg class="mk" viewBox="0 0 5.4 5" style="left:5322px;top:2849px"><path d="M0.4 2.5L4.9 0.4V4.6Z" fill="#ee0c18" stroke="#3a0606" stroke-width="0.75" stroke-linejoin="round"/></svg>
<span class="t b" style="left:5700px;top:1333px;transform:translateX(-50%);color:#0a0a30;">Offset_2</span>
<div class="vb" style="left:5587.5px;top:1420px;width:225px;height:64px;"></div>
<span class="t r" style="left:5700px;top:1414px;transform:translateX(-50%);font-size:47px;color:#333;">7.0</span>
<div class="ln" style="left:5696.5px;top:1520px;width:9px;height:1356px;background:#0c0c30;"></div>
<svg class="mk" viewBox="0 0 5.4 5" style="left:5707px;top:2545px"><path d="M0.4 2.5L4.9 0.4V4.6Z" fill="#ee0c18" stroke="#3a0606" stroke-width="0.75" stroke-linejoin="round"/></svg>
<span class="t b" style="left:6086px;top:1333px;transform:translateX(-50%);color:#0a0a30;">Offset_3</span>
<div class="vb" style="left:5973.5px;top:1420px;width:225px;height:64px;"></div>
<span class="t r" style="left:6086px;top:1414px;transform:translateX(-50%);font-size:47px;color:#333;">13.0</span>
<div class="ln" style="left:6082.5px;top:1520px;width:9px;height:1356px;background:#0c0c30;"></div>
<svg class="mk" viewBox="0 0 5.4 5" style="left:6093px;top:2281px"><path d="M0.4 2.5L4.9 0.4V4.6Z" fill="#ee0c18" stroke="#3a0606" stroke-width="0.75" stroke-linejoin="round"/></svg>
<span class="t b" style="left:6471px;top:1333px;transform:translateX(-50%);color:#0a0a30;">Offset_4</span>
<div class="vb" style="left:6358.5px;top:1420px;width:225px;height:64px;"></div>
<span class="t r" style="left:6471px;top:1414px;transform:translateX(-50%);font-size:47px;color:#333;">27.0</span>
<div class="ln" style="left:6467.5px;top:1520px;width:9px;height:1356px;background:#0c0c30;"></div>
<svg class="mk" viewBox="0 0 5.4 5" style="left:6478px;top:1668px"><path d="M0.4 2.5L4.9 0.4V4.6Z" fill="#ee0c18" stroke="#3a0606" stroke-width="0.75" stroke-linejoin="round"/></svg>
<div class="pan" style="left:6765px;top:604px;width:3127px;height:2320px;background:#ffbf80;border-color:#dba36c;"></div>
<div class="tb" style="left:6806px;top:544px;width:1674px;height:107px;"></div>
<svg class="ic" style="left:6821px;top:562.5px;width:70px;height:70px" viewBox="0 0 7 7"><circle cx="3.5" cy="3.5" r="2.5" fill="#fff" stroke="#222" stroke-width="0.65"/><path d="M2 2.7H5L3.5 4.9Z" fill="#111"/></svg>
<span class="t b" style="left:6900px;top:559.5px;letter-spacing:-0.2px;">Euclidean Loops PowerFX Strings</span>
<svg class="ic" preserveAspectRatio="none" style="left:7778px;top:561px;width:76px;height:73px" viewBox="0 0 8 7"><rect x="0.35" y="0.35" width="7.3" height="6.3" rx="0.5" fill="#efefef" stroke="#8c8c8c" stroke-width="0.75"/><path d="M5.80 3.50L6.85 3.50M5.27 4.77L6.02 5.52M4.00 5.30L4.00 6.35M2.73 4.77L1.98 5.52M2.20 3.50L1.15 3.50M2.73 2.23L1.98 1.48M4.00 1.70L4.00 0.65M5.27 2.23L6.02 1.48" stroke="#555" stroke-width="1.15"/><circle cx="4" cy="3.5" r="1.5" fill="#fff" stroke="#555" stroke-width="1.25"/></svg>
<svg class="ic" preserveAspectRatio="none" style="left:7878px;top:561px;width:76px;height:73px" viewBox="0 0 8 7"><rect x="0.35" y="0.35" width="7.3" height="6.3" rx="0.5" fill="#f6f6f6" stroke="#8c8c8c" stroke-width="0.75"/><rect x="0.9" y="2.1" width="6.2" height="3.7" rx="0.5" fill="#505050"/><rect x="2.8" y="1.5" width="2.4" height="1" fill="#505050"/><circle cx="4" cy="3.95" r="1.45" fill="#6a9cff"/></svg>
<div class="sel2" style="left:7965px;top:562px;width:398px;height:71px;"></div>
<span class="t r" style="left:8142px;top:559.5px;transform:translateX(-50%);font-size:48px;color:#484848;-webkit-text-stroke:0;">murmrng fctry</span>
<svg class="ic" style="left:8312px;top:587.5px;width:30px;height:22px" viewBox="0 0 4 3"><path d="M0 0H4L2 3Z" fill="#111"/></svg>
<svg class="ic" preserveAspectRatio="none" style="left:8383px;top:561px;width:79px;height:73px" viewBox="0 0 8 7"><rect x="0.35" y="0.35" width="7.3" height="6.3" rx="0.5" fill="#efefef" stroke="#8c8c8c" stroke-width="0.75"/><rect x="1.5" y="1.3" width="2.9" height="2.6" fill="#fff" stroke="#333" stroke-width="0.7"/><rect x="3.4" y="3.1" width="3" height="2.7" fill="#fff" stroke="#333" stroke-width="0.7"/></svg>
<div class="btn" style="left:7002px;top:706px;width:328px;height:72px;"></div>
<span class="t m" style="left:7166px;top:700px;transform:translateX(-50%);font-size:51.5px;color:#1c1c1c;">Trigger_1</span>
<div class="btn" style="left:7780px;top:706px;width:328px;height:72px;"></div>
<span class="t m" style="left:7944px;top:700px;transform:translateX(-50%);font-size:51.5px;color:#1c1c1c;">Trigger_2</span>
<div class="btn" style="left:8555px;top:706px;width:330px;height:72px;"></div>
<span class="t m" style="left:8720px;top:700px;transform:translateX(-50%);font-size:51.5px;color:#1c1c1c;">Trigger_3</span>
<div class="btn" style="left:9325px;top:706px;width:330px;height:72px;"></div>
<span class="t m" style="left:9490px;top:700px;transform:translateX(-50%);font-size:51.5px;color:#1c1c1c;">Trigger_4</span>
<span class="t b" style="left:6802px;top:788px;color:#a09050;letter-spacing:-0.3px;">MetroLevel</span>
<div class="vb" style="left:6828px;top:874px;width:224px;height:64px;"></div>
<span class="t r" style="left:6940px;top:868px;transform:translateX(-50%);font-size:47px;color:#333;">0.0</span>
<div class="ln" style="left:6933.5px;top:970px;width:9px;height:380px;background:#3a2a1a;"></div>
<svg class="mk" viewBox="0 0 5.4 5" style="left:6944px;top:1318px"><path d="M0.4 2.5L4.9 0.4V4.6Z" fill="#ee0c18" stroke="#3a0606" stroke-width="0.75" stroke-linejoin="round"/></svg>
<span class="t b" style="left:7290px;top:788px;color:#a89a90;">Level_1</span>
<div class="vb" style="left:7270px;top:874px;width:228px;height:64px;"></div>
<span class="t r" style="left:7384px;top:868px;transform:translateX(-50%);font-size:47px;color:#333;">1.0</span>
<div class="ln" style="left:7380.5px;top:970px;width:9px;height:380px;"></div>
<svg class="mk" viewBox="0 0 5.4 5" style="left:7391px;top:951px"><path d="M0.4 2.5L4.9 0.4V4.6Z" fill="#ee0c18" stroke="#3a0606" stroke-width="0.75" stroke-linejoin="round"/></svg>
<span class="t b" style="left:8280px;top:788px;transform:translateX(-100%);color:#a89a90;">Level_2</span>
<div class="vb" style="left:8080px;top:874px;width:226px;height:64px;"></div>
<span class="t r" style="left:8193px;top:868px;transform:translateX(-50%);font-size:47px;color:#333;">1.0</span>
<div class="ln" style="left:8188.5px;top:970px;width:9px;height:380px;"></div>
<svg class="mk" viewBox="0 0 5.4 5" style="left:8199px;top:951px"><path d="M0.4 2.5L4.9 0.4V4.6Z" fill="#ee0c18" stroke="#3a0606" stroke-width="0.75" stroke-linejoin="round"/></svg>
<span class="t b" style="left:9032px;top:788px;transform:translateX(-100%);color:#a89a90;">Level_3</span>
<div class="vb" style="left:8830px;top:874px;width:228px;height:64px;"></div>
<span class="t r" style="left:8944px;top:868px;transform:translateX(-50%);font-size:47px;color:#333;">1.0</span>
<div class="ln" style="left:8938.5px;top:970px;width:9px;height:380px;"></div>
<svg class="mk" viewBox="0 0 5.4 5" style="left:8949px;top:951px"><path d="M0.4 2.5L4.9 0.4V4.6Z" fill="#ee0c18" stroke="#3a0606" stroke-width="0.75" stroke-linejoin="round"/></svg>
<span class="t b" style="left:9810px;top:788px;transform:translateX(-100%);color:#a89a90;">Level_4</span>
<div class="vb" style="left:9610px;top:874px;width:226px;height:64px;"></div>
<span class="t r" style="left:9723px;top:868px;transform:translateX(-50%);font-size:47px;color:#333;">1.0</span>
<div class="ln" style="left:9718.5px;top:970px;width:9px;height:380px;"></div>
<svg class="mk" viewBox="0 0 5.4 5" style="left:9729px;top:951px"><path d="M0.4 2.5L4.9 0.4V4.6Z" fill="#ee0c18" stroke="#3a0606" stroke-width="0.75" stroke-linejoin="round"/></svg>
<span class="t b" style="left:6790px;top:1366px;color:#1a1008;">Index_1</span>
<div class="it sel" style="left:6796px;top:1454px;width:748px;height:95px;"></div>
<span class="t m" style="left:6852px;top:1462px;font-size:54.2px;color:#1a1a1a;">085_100Quartet_Amin</span>
<div class="it" style="left:6796px;top:1561.5px;width:748px;height:95px;"></div>
<span class="t m" style="left:6852px;top:1569.5px;font-size:54.2px;color:#1a1a1a;">205_90Quartet_Emin</span>
<div class="it" style="left:6796px;top:1669px;width:748px;height:95px;"></div>
<span class="t m" style="left:6852px;top:1677px;font-size:54.2px;color:#1a1a1a;">378_Pad Emin 01</span>
<div class="it" style="left:6796px;top:1776.5px;width:748px;height:95px;"></div>
<span class="t m" style="left:6852px;top:1784.5px;font-size:54.2px;color:#1a1a1a;">385_Pad Gmin 02</span>
<span class="t b" style="left:6790px;top:2023px;color:#1a1008;">Offset_1</span>
<span class="t b" style="left:7562px;top:1366px;color:#1a1008;">Index_2</span>
<div class="it" style="left:7568px;top:1454px;width:750px;height:95px;"></div>
<span class="t m" style="left:7624px;top:1462px;font-size:54.2px;color:#1a1a1a;">085_100Quartet_Amin</span>
<div class="it sel" style="left:7568px;top:1561.5px;width:750px;height:95px;"></div>
<span class="t m" style="left:7624px;top:1569.5px;font-size:54.2px;color:#1a1a1a;">205_90Quartet_Emin</span>
<div class="it" style="left:7568px;top:1669px;width:750px;height:95px;"></div>
<span class="t m" style="left:7624px;top:1677px;font-size:54.2px;color:#1a1a1a;">378_Pad Emin 01</span>
<div class="it" style="left:7568px;top:1776.5px;width:750px;height:95px;"></div>
<span class="t m" style="left:7624px;top:1784.5px;font-size:54.2px;color:#1a1a1a;">385_Pad Gmin 02</span>
<span class="t b" style="left:7562px;top:2023px;color:#1a1008;">Offset_2</span>
<span class="t b" style="left:8338px;top:1366px;color:#1a1008;">Index_3</span>
<div class="it" style="left:8344px;top:1454px;width:746px;height:95px;"></div>
<span class="t m" style="left:8400px;top:1462px;font-size:54.2px;color:#1a1a1a;">085_100Quartet_Amin</span>
<div class="it" style="left:8344px;top:1561.5px;width:746px;height:95px;"></div>
<span class="t m" style="left:8400px;top:1569.5px;font-size:54.2px;color:#1a1a1a;">205_90Quartet_Emin</span>
<div class="it sel" style="left:8344px;top:1669px;width:746px;height:95px;"></div>
<span class="t m" style="left:8400px;top:1677px;font-size:54.2px;color:#1a1a1a;">378_Pad Emin 01</span>
<div class="it" style="left:8344px;top:1776.5px;width:746px;height:95px;"></div>
<span class="t m" style="left:8400px;top:1784.5px;font-size:54.2px;color:#1a1a1a;">385_Pad Gmin 02</span>
<span class="t b" style="left:8338px;top:2023px;color:#1a1008;">Offset_3</span>
<span class="t b" style="left:9108px;top:1366px;color:#1a1008;">Index_4</span>
<div class="it" style="left:9114px;top:1454px;width:746px;height:95px;"></div>
<span class="t m" style="left:9170px;top:1462px;font-size:54.2px;color:#1a1a1a;">085_100Quartet_Amin</span>
<div class="it" style="left:9114px;top:1561.5px;width:746px;height:95px;"></div>
<span class="t m" style="left:9170px;top:1569.5px;font-size:54.2px;color:#1a1a1a;">205_90Quartet_Emin</span>
<div class="it" style="left:9114px;top:1669px;width:746px;height:95px;"></div>
<span class="t m" style="left:9170px;top:1677px;font-size:54.2px;color:#1a1a1a;">378_Pad Emin 01</span>
<div class="it sel" style="left:9114px;top:1776.5px;width:746px;height:95px;"></div>
<span class="t m" style="left:9170px;top:1784.5px;font-size:54.2px;color:#1a1a1a;">385_Pad Gmin 02</span>
<span class="t b" style="left:9108px;top:2023px;color:#1a1008;">Offset_4</span>
<div class="vb" style="left:6795px;top:2107px;width:233px;height:64px;"></div>
<span class="t r" style="left:6911.5px;top:2101px;transform:translateX(-50%);font-size:47px;color:#333;">12.0</span>
<div class="ln" style="left:7060px;top:2122.5px;width:474px;height:11px;background:#7a5230;"></div>
<svg class="mk" viewBox="0 0 5.4 5" style="left:7211px;top:2139px"><path d="M2.7 0.4L4.9 4.6H0.5Z" fill="#ee0c18" stroke="#3a0606" stroke-width="0.75" stroke-linejoin="round"/></svg>
<div class="vb" style="left:7567px;top:2107px;width:233px;height:64px;"></div>
<span class="t r" style="left:7683.5px;top:2101px;transform:translateX(-50%);font-size:47px;color:#333;">3.0</span>
<div class="ln" style="left:7832px;top:2122.5px;width:476px;height:11px;background:#7a5230;"></div>
<svg class="mk" viewBox="0 0 5.4 5" style="left:7851px;top:2139px"><path d="M2.7 0.4L4.9 4.6H0.5Z" fill="#ee0c18" stroke="#3a0606" stroke-width="0.75" stroke-linejoin="round"/></svg>
<div class="vb" style="left:8343px;top:2107px;width:233px;height:64px;"></div>
<span class="t r" style="left:8459.5px;top:2101px;transform:translateX(-50%);font-size:47px;color:#333;">5.0</span>
<div class="ln" style="left:8608px;top:2122.5px;width:472px;height:11px;background:#7a5230;"></div>
<svg class="mk" viewBox="0 0 5.4 5" style="left:8655px;top:2139px"><path d="M2.7 0.4L4.9 4.6H0.5Z" fill="#ee0c18" stroke="#3a0606" stroke-width="0.75" stroke-linejoin="round"/></svg>
<div class="vb" style="left:9113px;top:2107px;width:233px;height:64px;"></div>
<span class="t r" style="left:9229.5px;top:2101px;transform:translateX(-50%);font-size:47px;color:#333;">23.0</span>
<div class="ln" style="left:9378px;top:2122.5px;width:472px;height:11px;background:#7a5230;"></div>
<svg class="mk" viewBox="0 0 5.4 5" style="left:9691px;top:2139px"><path d="M2.7 0.4L4.9 4.6H0.5Z" fill="#ee0c18" stroke="#3a0606" stroke-width="0.75" stroke-linejoin="round"/></svg>
<div class="pan" style="left:345px;top:3146px;width:3130px;height:1240px;background:#aa80d5;border-color:#9270b8;"></div>
<div class="tb" style="left:391px;top:3089px;width:1427px;height:107px;"></div>
<svg class="ic" style="left:406px;top:3107.5px;width:70px;height:70px" viewBox="0 0 7 7"><circle cx="3.5" cy="3.5" r="2.5" fill="#fff" stroke="#222" stroke-width="0.65"/><path d="M2 2.7H5L3.5 4.9Z" fill="#111"/></svg>
<span class="t b" style="left:483px;top:3104.5px;letter-spacing:-0.2px;">CristianVogelBeatLoops</span>
<svg class="ic" preserveAspectRatio="none" style="left:1113px;top:3106px;width:79px;height:73px" viewBox="0 0 8 7"><rect x="0.35" y="0.35" width="7.3" height="6.3" rx="0.5" fill="#efefef" stroke="#8c8c8c" stroke-width="0.75"/><path d="M5.80 3.50L6.85 3.50M5.27 4.77L6.02 5.52M4.00 5.30L4.00 6.35M2.73 4.77L1.98 5.52M2.20 3.50L1.15 3.50M2.73 2.23L1.98 1.48M4.00 1.70L4.00 0.65M5.27 2.23L6.02 1.48" stroke="#555" stroke-width="1.15"/><circle cx="4" cy="3.5" r="1.5" fill="#fff" stroke="#555" stroke-width="1.25"/></svg>
<svg class="ic" preserveAspectRatio="none" style="left:1213px;top:3106px;width:79px;height:73px" viewBox="0 0 8 7"><rect x="0.35" y="0.35" width="7.3" height="6.3" rx="0.5" fill="#f6f6f6" stroke="#8c8c8c" stroke-width="0.75"/><rect x="0.9" y="2.1" width="6.2" height="3.7" rx="0.5" fill="#505050"/><rect x="2.8" y="1.5" width="2.4" height="1" fill="#505050"/><circle cx="4" cy="3.95" r="1.45" fill="#6a9cff"/></svg>
<div class="sel2" style="left:1305px;top:3107px;width:400px;height:71px;"></div>
<span class="t r" style="left:1483px;top:3104.5px;transform:translateX(-50%);font-size:48px;color:#484848;-webkit-text-stroke:0;">crackling wail</span>
<svg class="ic" style="left:1654px;top:3132.5px;width:30px;height:22px" viewBox="0 0 4 3"><path d="M0 0H4L2 3Z" fill="#111"/></svg>
<svg class="ic" preserveAspectRatio="none" style="left:1723px;top:3106px;width:75px;height:73px" viewBox="0 0 8 7"><rect x="0.35" y="0.35" width="7.3" height="6.3" rx="0.5" fill="#efefef" stroke="#8c8c8c" stroke-width="0.75"/><rect x="1.5" y="1.3" width="2.9" height="2.6" fill="#fff" stroke="#333" stroke-width="0.7"/><rect x="3.4" y="3.1" width="3" height="2.7" fill="#fff" stroke="#333" stroke-width="0.7"/></svg>
<div class="btn" style="left:1433px;top:3246px;width:275px;height:74px;"></div>
<span class="t m" style="left:1570.5px;top:3241px;transform:translateX(-50%);font-size:51.5px;color:#1c1c1c;">Trigger</span>
<span class="t b" style="left:370px;top:3321px;color:#1a0830;">Index</span>
<div class="it" style="left:376px;top:3405px;width:2388px;height:96px;"></div>
<span class="t m" style="left:432px;top:3413.5px;font-size:54.2px;color:#1a1a1a;">100 Floaty Blows</span>
<div class="it" style="left:376px;top:3513.6px;width:2388px;height:96px;"></div>
<span class="t m" style="left:432px;top:3522.1px;font-size:54.2px;color:#1a1a1a;">115bpm 808 Beat</span>
<div class="it" style="left:376px;top:3622.2px;width:2388px;height:96px;"></div>
<span class="t m" style="left:432px;top:3630.7px;font-size:54.2px;color:#1a1a1a;">118 AutoBerlin NeverEngine</span>
<div class="it" style="left:376px;top:3730.8px;width:2388px;height:96px;"></div>
<span class="t m" style="left:432px;top:3739.3px;font-size:54.2px;color:#1a1a1a;">118 Tap Jazz Model</span>
<div class="it sel" style="left:376px;top:3839.4px;width:2388px;height:96px;"></div>
<span class="t m" style="left:432px;top:3847.9px;font-size:54.2px;color:#1a1a1a;">118 Urgent House Groove</span>
<div class="it" style="left:376px;top:3948px;width:2388px;height:96px;"></div>
<span class="t m" style="left:432px;top:3956.5px;font-size:54.2px;color:#1a1a1a;">124 Euclid perc A</span>
<div class="it" style="left:376px;top:4056.6px;width:2388px;height:96px;"></div>
<span class="t m" style="left:432px;top:4065.1px;font-size:54.2px;color:#1a1a1a;">130 Cristian Vogel Sound</span>
<div class="it" style="left:376px;top:4165.2px;width:2388px;height:96px;"></div>
<span class="t m" style="left:432px;top:4173.7px;font-size:54.2px;color:#1a1a1a;">80 Gumbo NeverEngine</span>
<span class="t b" style="left:3100px;top:3211px;transform:translateX(-50%);color:#1a0830;">Level</span>
<div class="vb" style="left:2989.5px;top:3294px;width:225px;height:64px;"></div>
<span class="t r" style="left:3102px;top:3288px;transform:translateX(-50%);font-size:47px;color:#333;">1.0</span>
<div class="ln" style="left:3094.5px;top:3390px;width:11px;height:948px;background:#3a2050;"></div>
<svg class="mk" viewBox="0 0 5.4 5" style="left:3106px;top:3371px"><path d="M0.4 2.5L4.9 0.4V4.6Z" fill="#ee0c18" stroke="#3a0606" stroke-width="0.75" stroke-linejoin="round"/></svg>
<div class="pan" style="left:3565px;top:3146px;width:3115px;height:1240px;background:#80ff80;border-color:#70d870;"></div>
<div class="tb" style="left:3601px;top:3089px;width:1092px;height:107px;"></div>
<svg class="ic" style="left:3616px;top:3107.5px;width:70px;height:70px" viewBox="0 0 7 7"><circle cx="3.5" cy="3.5" r="2.5" fill="#fff" stroke="#222" stroke-width="0.65"/><path d="M2 2.7H5L3.5 4.9Z" fill="#111"/></svg>
<span class="t b" style="left:3698px;top:3104.5px;letter-spacing:-1.9px;">RazorCode</span>
<svg class="ic" preserveAspectRatio="none" style="left:3990px;top:3106px;width:75px;height:73px" viewBox="0 0 8 7"><rect x="0.35" y="0.35" width="7.3" height="6.3" rx="0.5" fill="#efefef" stroke="#8c8c8c" stroke-width="0.75"/><path d="M5.80 3.50L6.85 3.50M5.27 4.77L6.02 5.52M4.00 5.30L4.00 6.35M2.73 4.77L1.98 5.52M2.20 3.50L1.15 3.50M2.73 2.23L1.98 1.48M4.00 1.70L4.00 0.65M5.27 2.23L6.02 1.48" stroke="#555" stroke-width="1.15"/><circle cx="4" cy="3.5" r="1.5" fill="#fff" stroke="#555" stroke-width="1.25"/></svg>
<svg class="ic" preserveAspectRatio="none" style="left:4088px;top:3106px;width:74px;height:73px" viewBox="0 0 8 7"><rect x="0.35" y="0.35" width="7.3" height="6.3" rx="0.5" fill="#f6f6f6" stroke="#8c8c8c" stroke-width="0.75"/><rect x="0.9" y="2.1" width="6.2" height="3.7" rx="0.5" fill="#505050"/><rect x="2.8" y="1.5" width="2.4" height="1" fill="#505050"/><circle cx="4" cy="3.95" r="1.45" fill="#6a9cff"/></svg>
<div class="sel2" style="left:4177px;top:3107px;width:398px;height:71px;"></div>
<span class="t r" style="left:4354px;top:3104.5px;transform:translateX(-50%);font-size:48px;color:#484848;-webkit-text-stroke:0;">vast mist</span>
<svg class="ic" style="left:4524px;top:3132.5px;width:30px;height:22px" viewBox="0 0 4 3"><path d="M0 0H4L2 3Z" fill="#111"/></svg>
<svg class="ic" preserveAspectRatio="none" style="left:4595px;top:3106px;width:75px;height:73px" viewBox="0 0 8 7"><rect x="0.35" y="0.35" width="7.3" height="6.3" rx="0.5" fill="#efefef" stroke="#8c8c8c" stroke-width="0.75"/><rect x="1.5" y="1.3" width="2.9" height="2.6" fill="#fff" stroke="#333" stroke-width="0.7"/><rect x="3.4" y="3.1" width="3" height="2.7" fill="#fff" stroke="#333" stroke-width="0.7"/></svg>
<span class="t r" style="left:3606px;top:3212px;color:#10300f;letter-spacing:0.1px;white-space:pre;">Last two pitches are scaled by F1 and F2.  Replace input with any KBD controlled Sound.</span>
<span class="t b" style="left:3774px;top:3337px;transform:translateX(-50%);color:#082008;">Amplitude</span>
<div class="vb" style="left:3661.5px;top:3419px;width:225px;height:64px;"></div>
<span class="t r" style="left:3774px;top:3413px;transform:translateX(-50%);font-size:47px;color:#333;">1.0</span>
<div class="ln" style="left:3770.5px;top:3515px;width:9px;height:311px;background:#0a200a;"></div>
<svg class="mk" viewBox="0 0 5.4 5" style="left:3781px;top:3497px"><path d="M0.4 2.5L4.9 0.4V4.6Z" fill="#ee0c18" stroke="#3a0606" stroke-width="0.75" stroke-linejoin="round"/></svg>
<span class="t b" style="left:4157px;top:3337px;transform:translateX(-50%);color:#082008;">Bandwidth</span>
<div class="vb" style="left:4044.5px;top:3419px;width:225px;height:64px;"></div>
<span class="t r" style="left:4157px;top:3413px;transform:translateX(-50%);font-size:47px;color:#333;">0.65158</span>
<div class="ln" style="left:4153.5px;top:3515px;width:9px;height:311px;background:#0a200a;"></div>
<svg class="mk" viewBox="0 0 5.4 5" style="left:4164px;top:3601px"><path d="M0.4 2.5L4.9 0.4V4.6Z" fill="#ee0c18" stroke="#3a0606" stroke-width="0.75" stroke-linejoin="round"/></svg>
<span class="t b" style="left:4930px;top:3337px;transform:translateX(-50%);color:#082008;">Detune1</span>
<div class="vb" style="left:4817.5px;top:3419px;width:225px;height:64px;"></div>
<span class="t r" style="left:4930px;top:3413px;transform:translateX(-50%);font-size:47px;color:#333;">0.040338</span>
<div class="ln" style="left:4926.5px;top:3515px;width:9px;height:311px;background:#0a200a;"></div>
<svg class="mk" viewBox="0 0 5.4 5" style="left:4937px;top:3787px"><path d="M0.4 2.5L4.9 0.4V4.6Z" fill="#ee0c18" stroke="#3a0606" stroke-width="0.75" stroke-linejoin="round"/></svg>
<span class="t b" style="left:5315px;top:3337px;transform:translateX(-50%);color:#082008;">Detune2</span>
<div class="vb" style="left:5202.5px;top:3419px;width:225px;height:64px;"></div>
<span class="t r" style="left:5315px;top:3413px;transform:translateX(-50%);font-size:47px;color:#333;">0.16918</span>
<div class="ln" style="left:5311.5px;top:3515px;width:9px;height:311px;background:#0a200a;"></div>
<svg class="mk" viewBox="0 0 5.4 5" style="left:5322px;top:3750px"><path d="M0.4 2.5L4.9 0.4V4.6Z" fill="#ee0c18" stroke="#3a0606" stroke-width="0.75" stroke-linejoin="round"/></svg>
<span class="t b" style="left:5700px;top:3337px;transform:translateX(-50%);color:#082008;">F1</span>
<div class="vb" style="left:5587.5px;top:3419px;width:225px;height:64px;"></div>
<span class="t r" style="left:5700px;top:3413px;transform:translateX(-50%);font-size:47px;color:#333;">0.61934</span>
<div class="ln" style="left:5695px;top:3515px;width:12px;height:311px;background:#2a602a;"></div>
<svg class="mk" viewBox="0 0 5.4 5" style="left:5707px;top:3608px"><path d="M0.4 2.5L4.9 0.4V4.6Z" fill="#ee0c18" stroke="#3a0606" stroke-width="0.75" stroke-linejoin="round"/></svg>
<span class="t b" style="left:6086px;top:3337px;transform:translateX(-50%);color:#082008;">F2</span>
<div class="vb" style="left:5973.5px;top:3419px;width:225px;height:64px;"></div>
<span class="t r" style="left:6086px;top:3413px;transform:translateX(-50%);font-size:47px;color:#333;">0.12689</span>
<div class="ln" style="left:6081px;top:3515px;width:12px;height:311px;background:#2a602a;"></div>
<svg class="mk" viewBox="0 0 5.4 5" style="left:6093px;top:3762px"><path d="M0.4 2.5L4.9 0.4V4.6Z" fill="#ee0c18" stroke="#3a0606" stroke-width="0.75" stroke-linejoin="round"/></svg>
<span class="t b" style="left:6471px;top:3337px;transform:translateX(-50%);color:#082008;">Feedback</span>
<div class="vb" style="left:6358.5px;top:3419px;width:225px;height:64px;"></div>
<span class="t r" style="left:6471px;top:3413px;transform:translateX(-50%);font-size:47px;color:#333;">0.5</span>
<div class="ln" style="left:6466px;top:3515px;width:12px;height:311px;background:#2a602a;"></div>
<svg class="mk" viewBox="0 0 5.4 5" style="left:6478px;top:3650px"><path d="M0.4 2.5L4.9 0.4V4.6Z" fill="#ee0c18" stroke="#3a0606" stroke-width="0.75" stroke-linejoin="round"/></svg>
<span class="t b" style="left:3774px;top:3844px;transform:translateX(-50%);color:#082008;">Index</span>
<div class="vb" style="left:3661.5px;top:3930px;width:225px;height:63px;"></div>
<span class="t r" style="left:3774px;top:3923.5px;transform:translateX(-50%);font-size:47px;color:#333;">2.0</span>
<div class="ln" style="left:3770.5px;top:4025px;width:9px;height:313px;background:#0a200a;"></div>
<svg class="mk" viewBox="0 0 5.4 5" style="left:3781px;top:4005px"><path d="M0.4 2.5L4.9 0.4V4.6Z" fill="#ee0c18" stroke="#3a0606" stroke-width="0.75" stroke-linejoin="round"/></svg>
<span class="t b" style="left:4157px;top:3844px;transform:translateX(-50%);color:#082008;">InputLevel</span>
<div class="vb" style="left:4044.5px;top:3930px;width:225px;height:63px;"></div>
<span class="t r" style="left:4157px;top:3923.5px;transform:translateX(-50%);font-size:47px;color:#333;">0.98214</span>
<div class="ln" style="left:4153.5px;top:4025px;width:9px;height:313px;background:#0a200a;"></div>
<svg class="mk" viewBox="0 0 5.4 5" style="left:4164px;top:4008px"><path d="M0.4 2.5L4.9 0.4V4.6Z" fill="#ee0c18" stroke="#3a0606" stroke-width="0.75" stroke-linejoin="round"/></svg>
<span class="t b" style="left:4543px;top:3844px;transform:translateX(-50%);color:#082008;">Resonance</span>
<div class="vb" style="left:4430.5px;top:3930px;width:225px;height:63px;"></div>
<span class="t r" style="left:4543px;top:3923.5px;transform:translateX(-50%);font-size:47px;color:#333;">0.42437</span>
<div class="ln" style="left:4539.5px;top:4025px;width:9px;height:313px;background:#0a200a;"></div>
<svg class="mk" viewBox="0 0 5.4 5" style="left:4550px;top:4180px"><path d="M0.4 2.5L4.9 0.4V4.6Z" fill="#ee0c18" stroke="#3a0606" stroke-width="0.75" stroke-linejoin="round"/></svg>
<span class="t b" style="left:4930px;top:3844px;transform:translateX(-50%);color:#082008;">TimeConstant</span>
<div class="vb" style="left:4817.5px;top:3930px;width:225px;height:63px;"></div>
<span class="t r" style="left:4930px;top:3923.5px;transform:translateX(-50%);font-size:47px;color:#333;">0.01</span>
<div class="ln" style="left:4926.5px;top:4025px;width:9px;height:313px;background:#0a200a;"></div>
<svg class="mk" viewBox="0 0 5.4 5" style="left:4937px;top:4311px"><path d="M0.4 2.5L4.9 0.4V4.6Z" fill="#ee0c18" stroke="#3a0606" stroke-width="0.75" stroke-linejoin="round"/></svg>
<span class="t b" style="left:5315px;top:3844px;transform:translateX(-50%);color:#082008;">VoiceLevel</span>
<div class="vb" style="left:5202.5px;top:3930px;width:225px;height:63px;"></div>
<span class="t r" style="left:5315px;top:3923.5px;transform:translateX(-50%);font-size:47px;color:#333;">0.91228</span>
<div class="ln" style="left:5311.5px;top:4025px;width:9px;height:313px;background:#0a200a;"></div>
<svg class="mk" viewBox="0 0 5.4 5" style="left:5322px;top:4028px"><path d="M0.4 2.5L4.9 0.4V4.6Z" fill="#ee0c18" stroke="#3a0606" stroke-width="0.75" stroke-linejoin="round"/></svg>
<div class="pan" style="left:6765px;top:3146px;width:3127px;height:564px;background:#aaaaaa;border-color:#999;"></div>
<div class="tb" style="left:6806px;top:3089px;width:1899px;height:107px;"></div>
<svg class="ic" style="left:6821px;top:3107.5px;width:70px;height:70px" viewBox="0 0 7 7"><circle cx="3.5" cy="3.5" r="2.5" fill="#fff" stroke="#222" stroke-width="0.65"/><path d="M2 2.7H5L3.5 4.9Z" fill="#111"/></svg>
<span class="t b" style="left:6900px;top:3104.5px;letter-spacing:1px;">increasing pulse density + trigger a break</span>
<svg class="ic" preserveAspectRatio="none" style="left:8008px;top:3106px;width:74px;height:73px" viewBox="0 0 8 7"><rect x="0.35" y="0.35" width="7.3" height="6.3" rx="0.5" fill="#efefef" stroke="#8c8c8c" stroke-width="0.75"/><path d="M5.80 3.50L6.85 3.50M5.27 4.77L6.02 5.52M4.00 5.30L4.00 6.35M2.73 4.77L1.98 5.52M2.20 3.50L1.15 3.50M2.73 2.23L1.98 1.48M4.00 1.70L4.00 0.65M5.27 2.23L6.02 1.48" stroke="#555" stroke-width="1.15"/><circle cx="4" cy="3.5" r="1.5" fill="#fff" stroke="#555" stroke-width="1.25"/></svg>
<svg class="ic" preserveAspectRatio="none" style="left:8108px;top:3106px;width:74px;height:73px" viewBox="0 0 8 7"><rect x="0.35" y="0.35" width="7.3" height="6.3" rx="0.5" fill="#f6f6f6" stroke="#8c8c8c" stroke-width="0.75"/><rect x="0.9" y="2.1" width="6.2" height="3.7" rx="0.5" fill="#505050"/><rect x="2.8" y="1.5" width="2.4" height="1" fill="#505050"/><circle cx="4" cy="3.95" r="1.45" fill="#6a9cff"/></svg>
<div class="sel2" style="left:8195px;top:3107px;width:400px;height:71px;"></div>
<span class="t r" style="left:8373px;top:3104.5px;transform:translateX(-50%);font-size:48px;color:#484848;-webkit-text-stroke:0;">- - inactive - -</span>
<svg class="ic" style="left:8544px;top:3132.5px;width:30px;height:22px" viewBox="0 0 4 3"><path d="M0 0H4L2 3Z" fill="#111"/></svg>
<svg class="ic" preserveAspectRatio="none" style="left:8613px;top:3106px;width:75px;height:73px" viewBox="0 0 8 7"><rect x="0.35" y="0.35" width="7.3" height="6.3" rx="0.5" fill="#efefef" stroke="#8c8c8c" stroke-width="0.75"/><rect x="1.5" y="1.3" width="2.9" height="2.6" fill="#fff" stroke="#333" stroke-width="0.7"/><rect x="3.4" y="3.1" width="3" height="2.7" fill="#fff" stroke="#333" stroke-width="0.7"/></svg>
<div class="tb" style="left:364px;top:4435px;width:569px;height:111px;"></div>
<svg class="ic" style="left:379px;top:4455.5px;width:70px;height:70px" viewBox="0 0 7 7"><circle cx="3.5" cy="3.5" r="2.5" fill="#fff" stroke="#222" stroke-width="0.65"/><circle cx="3.5" cy="3.5" r="1.3" fill="#111"/></svg>
<span class="t b" style="left:453px;top:4452.5px;letter-spacing:-0.1px;">Grid Controls</span>
<svg class="ic" preserveAspectRatio="none" style="left:828px;top:4454px;width:76px;height:73px" viewBox="0 0 8 7"><rect x="0.35" y="0.35" width="7.3" height="6.3" rx="0.5" fill="#efefef" stroke="#8c8c8c" stroke-width="0.75"/><path d="M5.80 3.50L6.85 3.50M5.27 4.77L6.02 5.52M4.00 5.30L4.00 6.35M2.73 4.77L1.98 5.52M2.20 3.50L1.15 3.50M2.73 2.23L1.98 1.48M4.00 1.70L4.00 0.65M5.27 2.23L6.02 1.48" stroke="#555" stroke-width="1.15"/><circle cx="4" cy="3.5" r="1.5" fill="#fff" stroke="#555" stroke-width="1.25"/></svg>
<div class="" style="left:853px;top:4570px;width:6px;height:1195px;background:#b4bcc4;"></div>
<div class="" style="left:1382px;top:4570px;width:6px;height:1195px;background:#b4bcc4;"></div>
<div class="" style="left:1912px;top:4570px;width:6px;height:1195px;background:#b4bcc4;"></div>
<div class="" style="left:2437px;top:4570px;width:6px;height:1195px;background:#b4bcc4;"></div>
<div class="" style="left:2953px;top:4570px;width:6px;height:1195px;background:#b4bcc4;"></div>
<div class="bdg" style="left:488px;top:4580px;width:226px;height:76px;background:#f08080;"></div>
<span class="t b" style="left:601px;top:4580px;transform:translateX(-50%);color:#7a1010;">Trk1</span>
<span class="t b" style="left:600px;top:4652px;transform:translateX(-50%);color:#111;">FadeIn</span>
<div class="vb2" style="left:489.5px;top:4737px;width:225px;height:64px;"></div>
<span class="t r" style="left:602px;top:4731px;transform:translateX(-50%);font-size:47px;color:#4a4a4a;">0.01</span>
<svg class="kn" style="left:537px;top:4812px" viewBox="-6 -6 12 12"><path d="M-2.65 2.65A3.75 3.75 0 1 1 2.65 2.65" fill="none" stroke="#0c0c14" stroke-width="1"/><path d="M-3.7 4.4L-2.9 0.5L0.01 2.94Z" fill="#f4101c"/></svg>
<span class="t b" style="left:600px;top:4921px;transform:translateX(-50%);color:#111;">FadeOut</span>
<div class="vb2" style="left:489.5px;top:5007px;width:225px;height:64px;"></div>
<span class="t r" style="left:602px;top:5001px;transform:translateX(-50%);font-size:47px;color:#4a4a4a;">0.01</span>
<svg class="kn" style="left:537px;top:5082px" viewBox="-6 -6 12 12"><path d="M-2.65 2.65A3.75 3.75 0 1 1 2.65 2.65" fill="none" stroke="#0c0c14" stroke-width="1"/><path d="M-3.7 4.4L-2.9 0.5L0.01 2.94Z" fill="#f4101c"/></svg>
<span class="t b" style="left:338px;top:5191px;color:#111;">Select Trk1</span>
<div class="gi" style="left:346px;top:5274px;width:502px;height:92px;background:#d8b4b8;"></div>
<span class="t b" style="left:396px;top:5279.5px;font-size:51px;color:#262626;">Inactive</span>
<div class="gi gs" style="left:346px;top:5384px;width:502px;height:92px;background:#f08080;"></div>
<span class="t b" style="left:396px;top:5389.5px;font-size:51px;color:#7a1010;">Ecldn BtLps St</span>
<div class="bdg" style="left:1014px;top:4580px;width:226px;height:76px;background:#8080f0;"></div>
<span class="t b" style="left:1127px;top:4580px;transform:translateX(-50%);color:#101070;">Trk2</span>
<span class="t b" style="left:1126px;top:4652px;transform:translateX(-50%);color:#111;">FadeIn</span>
<div class="vb2" style="left:1015.5px;top:4737px;width:225px;height:64px;"></div>
<span class="t r" style="left:1128px;top:4731px;transform:translateX(-50%);font-size:47px;color:#4a4a4a;">0.01</span>
<svg class="kn" style="left:1063px;top:4812px" viewBox="-6 -6 12 12"><path d="M-2.65 2.65A3.75 3.75 0 1 1 2.65 2.65" fill="none" stroke="#0c0c14" stroke-width="1"/><path d="M-3.7 4.4L-2.9 0.5L0.01 2.94Z" fill="#f4101c"/></svg>
<span class="t b" style="left:1126px;top:4921px;transform:translateX(-50%);color:#111;">FadeOut</span>
<div class="vb2" style="left:1015.5px;top:5007px;width:225px;height:64px;"></div>
<span class="t r" style="left:1128px;top:5001px;transform:translateX(-50%);font-size:47px;color:#4a4a4a;">0.01</span>
<svg class="kn" style="left:1063px;top:5082px" viewBox="-6 -6 12 12"><path d="M-2.65 2.65A3.75 3.75 0 1 1 2.65 2.65" fill="none" stroke="#0c0c14" stroke-width="1"/><path d="M-3.7 4.4L-2.9 0.5L0.01 2.94Z" fill="#f4101c"/></svg>
<span class="t b" style="left:866px;top:5191px;color:#111;">Select Trk2</span>
<div class="gi" style="left:874px;top:5274px;width:502px;height:92px;background:#b8b4d8;"></div>
<span class="t b" style="left:924px;top:5279.5px;font-size:51px;color:#262626;">Inactive</span>
<div class="gi gs" style="left:874px;top:5384px;width:502px;height:92px;background:#8080f0;"></div>
<span class="t b" style="left:924px;top:5389.5px;font-size:51px;color:#101070;">Ecldn Endlss G</span>
<div class="bdg" style="left:1539px;top:4580px;width:226px;height:76px;background:#f4b87c;"></div>
<span class="t b" style="left:1652px;top:4580px;transform:translateX(-50%);color:#7a4a10;">Trk3</span>
<span class="t b" style="left:1651px;top:4652px;transform:translateX(-50%);color:#111;">FadeIn</span>
<div class="vb2" style="left:1540.5px;top:4737px;width:225px;height:64px;"></div>
<span class="t r" style="left:1653px;top:4731px;transform:translateX(-50%);font-size:47px;color:#4a4a4a;">0.01</span>
<svg class="kn" style="left:1588px;top:4812px" viewBox="-6 -6 12 12"><path d="M-2.65 2.65A3.75 3.75 0 1 1 2.65 2.65" fill="none" stroke="#0c0c14" stroke-width="1"/><path d="M-3.7 4.4L-2.9 0.5L0.01 2.94Z" fill="#f4101c"/></svg>
<span class="t b" style="left:1651px;top:4921px;transform:translateX(-50%);color:#111;">FadeOut</span>
<div class="vb2" style="left:1540.5px;top:5007px;width:225px;height:64px;"></div>
<span class="t r" style="left:1653px;top:5001px;transform:translateX(-50%);font-size:47px;color:#4a4a4a;">0.01</span>
<svg class="kn" style="left:1588px;top:5082px" viewBox="-6 -6 12 12"><path d="M-2.65 2.65A3.75 3.75 0 1 1 2.65 2.65" fill="none" stroke="#0c0c14" stroke-width="1"/><path d="M-3.7 4.4L-2.9 0.5L0.01 2.94Z" fill="#f4101c"/></svg>
<span class="t b" style="left:1392px;top:5191px;color:#111;">Select Trk3</span>
<div class="gi" style="left:1400px;top:5274px;width:501px;height:92px;background:#d8c4b0;"></div>
<span class="t b" style="left:1450px;top:5279.5px;font-size:51px;color:#262626;">Inactive</span>
<div class="gi gs" style="left:1400px;top:5384px;width:501px;height:92px;background:#f4b87c;"></div>
<span class="t b" style="left:1450px;top:5389.5px;font-size:51px;color:#7a4a10;">Ecldn Lps PwrF</span>
<div class="bdg" style="left:2062px;top:4580px;width:226px;height:76px;background:#a880d0;"></div>
<span class="t b" style="left:2175px;top:4580px;transform:translateX(-50%);color:#3a1060;">Trk4</span>
<span class="t b" style="left:2174px;top:4652px;transform:translateX(-50%);color:#111;">FadeIn</span>
<div class="vb2" style="left:2063.5px;top:4737px;width:225px;height:64px;"></div>
<span class="t r" style="left:2176px;top:4731px;transform:translateX(-50%);font-size:47px;color:#4a4a4a;">0.01</span>
<svg class="kn" style="left:2111px;top:4812px" viewBox="-6 -6 12 12"><path d="M-2.65 2.65A3.75 3.75 0 1 1 2.65 2.65" fill="none" stroke="#0c0c14" stroke-width="1"/><path d="M-3.7 4.4L-2.9 0.5L0.01 2.94Z" fill="#f4101c"/></svg>
<span class="t b" style="left:2174px;top:4921px;transform:translateX(-50%);color:#111;">FadeOut</span>
<div class="vb2" style="left:2063.5px;top:5007px;width:225px;height:64px;"></div>
<span class="t r" style="left:2176px;top:5001px;transform:translateX(-50%);font-size:47px;color:#4a4a4a;">0.01</span>
<svg class="kn" style="left:2111px;top:5082px" viewBox="-6 -6 12 12"><path d="M-2.65 2.65A3.75 3.75 0 1 1 2.65 2.65" fill="none" stroke="#0c0c14" stroke-width="1"/><path d="M-3.7 4.4L-2.9 0.5L0.01 2.94Z" fill="#f4101c"/></svg>
<span class="t b" style="left:1916px;top:5191px;color:#111;">Select Trk4</span>
<div class="gi" style="left:1924px;top:5274px;width:501px;height:92px;background:#c4b4d4;"></div>
<span class="t b" style="left:1974px;top:5279.5px;font-size:51px;color:#262626;">Inactive</span>
<div class="gi gs" style="left:1924px;top:5384px;width:501px;height:92px;background:#a880d0;"></div>
<span class="t b" style="left:1974px;top:5389.5px;font-size:51px;color:#3a1060;">CristnVglBtLps</span>
<div class="bdg" style="left:2586px;top:4580px;width:226px;height:76px;background:#80f080;"></div>
<span class="t b" style="left:2699px;top:4580px;transform:translateX(-50%);color:#0a500a;">Trk5</span>
<span class="t b" style="left:2698px;top:4652px;transform:translateX(-50%);color:#111;">FadeIn</span>
<div class="vb2" style="left:2587.5px;top:4737px;width:225px;height:64px;"></div>
<span class="t r" style="left:2700px;top:4731px;transform:translateX(-50%);font-size:47px;color:#4a4a4a;">0.01</span>
<svg class="kn" style="left:2635px;top:4812px" viewBox="-6 -6 12 12"><path d="M-2.65 2.65A3.75 3.75 0 1 1 2.65 2.65" fill="none" stroke="#0c0c14" stroke-width="1"/><path d="M-3.7 4.4L-2.9 0.5L0.01 2.94Z" fill="#f4101c"/></svg>
<span class="t b" style="left:2698px;top:4921px;transform:translateX(-50%);color:#111;">FadeOut</span>
<div class="vb2" style="left:2587.5px;top:5007px;width:225px;height:64px;"></div>
<span class="t r" style="left:2700px;top:5001px;transform:translateX(-50%);font-size:47px;color:#4a4a4a;">0.01</span>
<svg class="kn" style="left:2635px;top:5082px" viewBox="-6 -6 12 12"><path d="M-2.65 2.65A3.75 3.75 0 1 1 2.65 2.65" fill="none" stroke="#0c0c14" stroke-width="1"/><path d="M-3.7 4.4L-2.9 0.5L0.01 2.94Z" fill="#f4101c"/></svg>
<span class="t b" style="left:2442px;top:5191px;color:#111;">Select Trk5</span>
<div class="gi" style="left:2450px;top:5274.5px;width:501px;height:91px;background:#b4d4b4;"></div>
<span class="t b" style="left:2500px;top:5279.5px;font-size:51px;color:#262626;">Inactive</span>
<div class="gi" style="left:2450px;top:5371.5px;width:501px;height:91px;background:#b4d4b4;"></div>
<span class="t b" style="left:2500px;top:5376.5px;font-size:51px;color:#262626;">BPM Dly 3/4 b</span>
<div class="gi" style="left:2450px;top:5466.5px;width:501px;height:91px;background:#b4d4b4;"></div>
<span class="t b" style="left:2500px;top:5471.5px;font-size:51px;color:#262626;">Brittle-izer</span>
<div class="gi gs" style="left:2450px;top:5561.5px;width:501px;height:91px;background:#80f080;"></div>
<span class="t b" style="left:2500px;top:5566.5px;font-size:51px;color:#0a500a;">RazorCode</span>
<div class="gi" style="left:2450px;top:5656.5px;width:501px;height:91px;background:#b4d4b4;"></div>
<span class="t b" style="left:2500px;top:5661.5px;font-size:51px;color:#262626;">Rome TaxiRadio</span>
<div class="bdg" style="left:3113px;top:4580px;width:226px;height:76px;background:#aaaaaa;"></div>
<span class="t b" style="left:3226px;top:4580px;transform:translateX(-50%);color:#363636;">Trk6</span>
<span class="t b" style="left:3225px;top:4652px;transform:translateX(-50%);color:#111;">FadeIn</span>
<div class="vb2" style="left:3114.5px;top:4737px;width:225px;height:64px;"></div>
<span class="t r" style="left:3227px;top:4731px;transform:translateX(-50%);font-size:47px;color:#4a4a4a;">0.01</span>
<svg class="kn" style="left:3162px;top:4812px" viewBox="-6 -6 12 12"><path d="M-2.65 2.65A3.75 3.75 0 1 1 2.65 2.65" fill="none" stroke="#0c0c14" stroke-width="1"/><path d="M-3.7 4.4L-2.9 0.5L0.01 2.94Z" fill="#f4101c"/></svg>
<span class="t b" style="left:3225px;top:4921px;transform:translateX(-50%);color:#111;">FadeOut</span>
<div class="vb2" style="left:3114.5px;top:5007px;width:225px;height:64px;"></div>
<span class="t r" style="left:3227px;top:5001px;transform:translateX(-50%);font-size:47px;color:#4a4a4a;">0.01</span>
<svg class="kn" style="left:3162px;top:5082px" viewBox="-6 -6 12 12"><path d="M-2.65 2.65A3.75 3.75 0 1 1 2.65 2.65" fill="none" stroke="#0c0c14" stroke-width="1"/><path d="M-3.7 4.4L-2.9 0.5L0.01 2.94Z" fill="#f4101c"/></svg>
<span class="t b" style="left:2964px;top:5191px;color:#111;">Select Trk6</span>
<div class="gi" style="left:2972px;top:5274px;width:505px;height:92px;background:#c0c0c0;"></div>
<span class="t b" style="left:3022px;top:5279.5px;font-size:51px;color:#262626;">Inactive</span>
<div class="gi gs" style="left:2972px;top:5384px;width:505px;height:92px;background:#aaaaaa;"></div>
<span class="t b" style="left:3022px;top:5389.5px;font-size:51px;color:#363636;">incrsng pls dns</span>
<div class="tb" style="left:3575px;top:4435px;width:611px;height:111px;"></div>
<svg class="ic" style="left:3590px;top:4455.5px;width:70px;height:70px" viewBox="0 0 7 7"><circle cx="3.5" cy="3.5" r="2.5" fill="#fff" stroke="#222" stroke-width="0.65"/><circle cx="3.5" cy="3.5" r="1.3" fill="#111"/></svg>
<span class="t b" style="left:3668px;top:4452.5px;letter-spacing:1px;">Mixer Controls</span>
<svg class="ic" preserveAspectRatio="none" style="left:4078px;top:4454px;width:76px;height:73px" viewBox="0 0 8 7"><rect x="0.35" y="0.35" width="7.3" height="6.3" rx="0.5" fill="#efefef" stroke="#8c8c8c" stroke-width="0.75"/><path d="M5.80 3.50L6.85 3.50M5.27 4.77L6.02 5.52M4.00 5.30L4.00 6.35M2.73 4.77L1.98 5.52M2.20 3.50L1.15 3.50M2.73 2.23L1.98 1.48M4.00 1.70L4.00 0.65M5.27 2.23L6.02 1.48" stroke="#555" stroke-width="1.15"/><circle cx="4" cy="3.5" r="1.5" fill="#fff" stroke="#555" stroke-width="1.25"/></svg>
<div class="" style="left:4072px;top:4570px;width:6px;height:1195px;background:#b4bcc4;"></div>
<div class="" style="left:4595px;top:4570px;width:6px;height:1195px;background:#b4bcc4;"></div>
<div class="" style="left:5117px;top:4570px;width:6px;height:1195px;background:#b4bcc4;"></div>
<div class="" style="left:5642px;top:4570px;width:6px;height:1195px;background:#b4bcc4;"></div>
<div class="" style="left:6163px;top:4570px;width:6px;height:1195px;background:#b4bcc4;"></div>
<span class="t b" style="left:3810px;top:4553px;transform:translateX(-50%);color:#f0b030;">To Strange</span>
<svg class="kn" style="left:3750px;top:4634px" viewBox="-6 -6 12 12"><path d="M-2.65 2.65A3.75 3.75 0 1 1 2.65 2.65" fill="none" stroke="#0c0c14" stroke-width="1"/><path d="M4.07 4.07L0.25 2.93L2.93 0.25Z" fill="#f4101c"/></svg>
<span class="t b" style="left:5908px;top:4553px;transform:translateX(-50%);color:#f0b030;">From Strange</span>
<svg class="kn" style="left:5850px;top:4634px" viewBox="-6 -6 12 12"><path d="M-2.65 2.65A3.75 3.75 0 1 1 2.65 2.65" fill="none" stroke="#0c0c14" stroke-width="1"/><path d="M4.07 4.07L0.25 2.93L2.93 0.25Z" fill="#f4101c"/></svg>
<span class="t m" style="left:3811px;top:4839px;transform:translateX(-50%);color:#f08080;">Trk1</span>
<div class="vb2" style="left:3699.5px;top:4924px;width:225px;height:62px;"></div>
<span class="t r" style="left:3812px;top:4917px;transform:translateX(-50%);font-size:47px;color:#333;">1.0</span>
<div class="ln" style="left:3810.5px;top:5015px;width:9px;height:720px;"></div>
<svg class="mk" viewBox="0 0 5.4 5" style="left:3821px;top:4998px"><path d="M0.4 2.5L4.9 0.4V4.6Z" fill="#ee0c18" stroke="#3a0606" stroke-width="0.75" stroke-linejoin="round"/></svg>
<span class="t m" style="left:4333px;top:4839px;transform:translateX(-50%);color:#8080f0;">Trk2</span>
<div class="vb2" style="left:4221.5px;top:4924px;width:225px;height:62px;"></div>
<span class="t r" style="left:4334px;top:4917px;transform:translateX(-50%);font-size:47px;color:#333;">1.0</span>
<div class="ln" style="left:4332.5px;top:5015px;width:9px;height:720px;"></div>
<svg class="mk" viewBox="0 0 5.4 5" style="left:4343px;top:4998px"><path d="M0.4 2.5L4.9 0.4V4.6Z" fill="#ee0c18" stroke="#3a0606" stroke-width="0.75" stroke-linejoin="round"/></svg>
<span class="t m" style="left:4859px;top:4839px;transform:translateX(-50%);color:#f4b87c;">Trk3</span>
<div class="vb2" style="left:4747.5px;top:4924px;width:225px;height:62px;"></div>
<span class="t r" style="left:4860px;top:4917px;transform:translateX(-50%);font-size:47px;color:#333;">1.0</span>
<div class="ln" style="left:4857px;top:5015px;width:12px;height:720px;background:#44464c;"></div>
<svg class="mk" viewBox="0 0 5.4 5" style="left:4869px;top:4998px"><path d="M0.4 2.5L4.9 0.4V4.6Z" fill="#ee0c18" stroke="#3a0606" stroke-width="0.75" stroke-linejoin="round"/></svg>
<span class="t m" style="left:5380px;top:4839px;transform:translateX(-50%);color:#a880d0;">Trk4</span>
<div class="vb2" style="left:5268.5px;top:4924px;width:225px;height:62px;"></div>
<span class="t r" style="left:5381px;top:4917px;transform:translateX(-50%);font-size:47px;color:#333;">1.0</span>
<div class="ln" style="left:5378px;top:5015px;width:12px;height:720px;background:#44464c;"></div>
<svg class="mk" viewBox="0 0 5.4 5" style="left:5390px;top:4998px"><path d="M0.4 2.5L4.9 0.4V4.6Z" fill="#ee0c18" stroke="#3a0606" stroke-width="0.75" stroke-linejoin="round"/></svg>
<span class="t m" style="left:5907px;top:4839px;transform:translateX(-50%);color:#80f080;">Trk5</span>
<div class="vb2" style="left:5795.5px;top:4924px;width:225px;height:62px;"></div>
<span class="t r" style="left:5908px;top:4917px;transform:translateX(-50%);font-size:47px;color:#333;">1.0</span>
<div class="ln" style="left:5905px;top:5015px;width:12px;height:720px;background:#44464c;"></div>
<svg class="mk" viewBox="0 0 5.4 5" style="left:5917px;top:4998px"><path d="M0.4 2.5L4.9 0.4V4.6Z" fill="#ee0c18" stroke="#3a0606" stroke-width="0.75" stroke-linejoin="round"/></svg>
<span class="t m" style="left:6427px;top:4839px;transform:translateX(-50%);color:#aaaaaa;">Trk6</span>
<div class="vb2" style="left:6315.5px;top:4924px;width:225px;height:62px;"></div>
<span class="t r" style="left:6428px;top:4917px;transform:translateX(-50%);font-size:47px;color:#333;">1.0</span>
<div class="ln" style="left:6425px;top:5015px;width:12px;height:720px;background:#44464c;"></div>
<svg class="mk" viewBox="0 0 5.4 5" style="left:6437px;top:4998px"><path d="M0.4 2.5L4.9 0.4V4.6Z" fill="#ee0c18" stroke="#3a0606" stroke-width="0.75" stroke-linejoin="round"/></svg>
<div class="tb" style="left:6777px;top:4435px;width:636px;height:111px;"></div>
<svg class="ic" style="left:6792px;top:4455.5px;width:70px;height:70px" viewBox="0 0 7 7"><circle cx="3.5" cy="3.5" r="2.5" fill="#fff" stroke="#222" stroke-width="0.65"/><circle cx="3.5" cy="3.5" r="1.3" fill="#111"/></svg>
<span class="t b" style="left:6870px;top:4452.5px;letter-spacing:-0.2px;">Shared Controls</span>
<svg class="ic" preserveAspectRatio="none" style="left:7308px;top:4454px;width:77px;height:73px" viewBox="0 0 8 7"><rect x="0.35" y="0.35" width="7.3" height="6.3" rx="0.5" fill="#efefef" stroke="#8c8c8c" stroke-width="0.75"/><path d="M5.80 3.50L6.85 3.50M5.27 4.77L6.02 5.52M4.00 5.30L4.00 6.35M2.73 4.77L1.98 5.52M2.20 3.50L1.15 3.50M2.73 2.23L1.98 1.48M4.00 1.70L4.00 0.65M5.27 2.23L6.02 1.48" stroke="#555" stroke-width="1.15"/><circle cx="4" cy="3.5" r="1.5" fill="#fff" stroke="#555" stroke-width="1.25"/></svg>
<span class="t b" style="left:6900px;top:4553px;transform:translateX(-50%);color:#111;">Pulses</span>
<div class="vb2" style="left:6787.5px;top:4637px;width:225px;height:61px;"></div>
<span class="t r" style="left:6900px;top:4629.5px;transform:translateX(-50%);font-size:47px;color:#4a4a4a;">4.0</span>
<div class="ln" style="left:6893.5px;top:4730px;width:13px;height:525px;background:#555a64;"></div>
<svg class="mk" viewBox="0 0 5.4 5" style="left:6906px;top:5181px"><path d="M0.4 2.5L4.9 0.4V4.6Z" fill="#ee0c18" stroke="#3a0606" stroke-width="0.75" stroke-linejoin="round"/></svg>
<div class="brk" style="left:6755px;top:5292px;width:390px;height:76px;"></div>
<span class="t b" style="left:6950px;top:5292px;transform:translateX(-50%);color:#222;">Break</span>
<div class="btn" style="left:7180px;top:5448px;width:336px;height:77px;"></div>
<span class="t m" style="left:7348px;top:5444.5px;transform:translateX(-50%);font-size:51.5px;color:#1c1c1c;">TrigBreak</span>
<span class="t b" style="left:8725px;top:4553px;transform:translateX(-50%);color:#909090;">Beats</span>
<div class="vb2" style="left:8614.5px;top:4637px;width:225px;height:61px;"></div>
<span class="t r" style="left:8727px;top:4629.5px;transform:translateX(-50%);font-size:47px;color:#333;">16.0</span>
<svg class="kn" style="left:8666px;top:4720px" viewBox="-6 -6 12 12"><path d="M-2.65 2.65A3.75 3.75 0 1 1 2.65 2.65" fill="none" stroke="#0c0c14" stroke-width="1"/><path d="M-5.08 -2.7L-1.09 -2.73L-2.88 0.62Z" fill="#f4101c"/></svg>
<span class="t b" style="left:9510px;top:4553px;transform:translateX(-50%);color:#909090;">BPM</span>
<div class="vb2" style="left:9399.5px;top:4637px;width:225px;height:61px;"></div>
<span class="t r" style="left:9512px;top:4629.5px;transform:translateX(-50%);font-size:47px;color:#333;">240.0</span>
<svg class="kn" style="left:9452px;top:4720px" viewBox="-6 -6 12 12"><path d="M-2.65 2.65A3.75 3.75 0 1 1 2.65 2.65" fill="none" stroke="#0c0c14" stroke-width="1"/><path d="M-5.55 1.49L-2.67 -1.25L-1.68 2.42Z" fill="#f4101c"/></svg>
</div>
</body></html>
